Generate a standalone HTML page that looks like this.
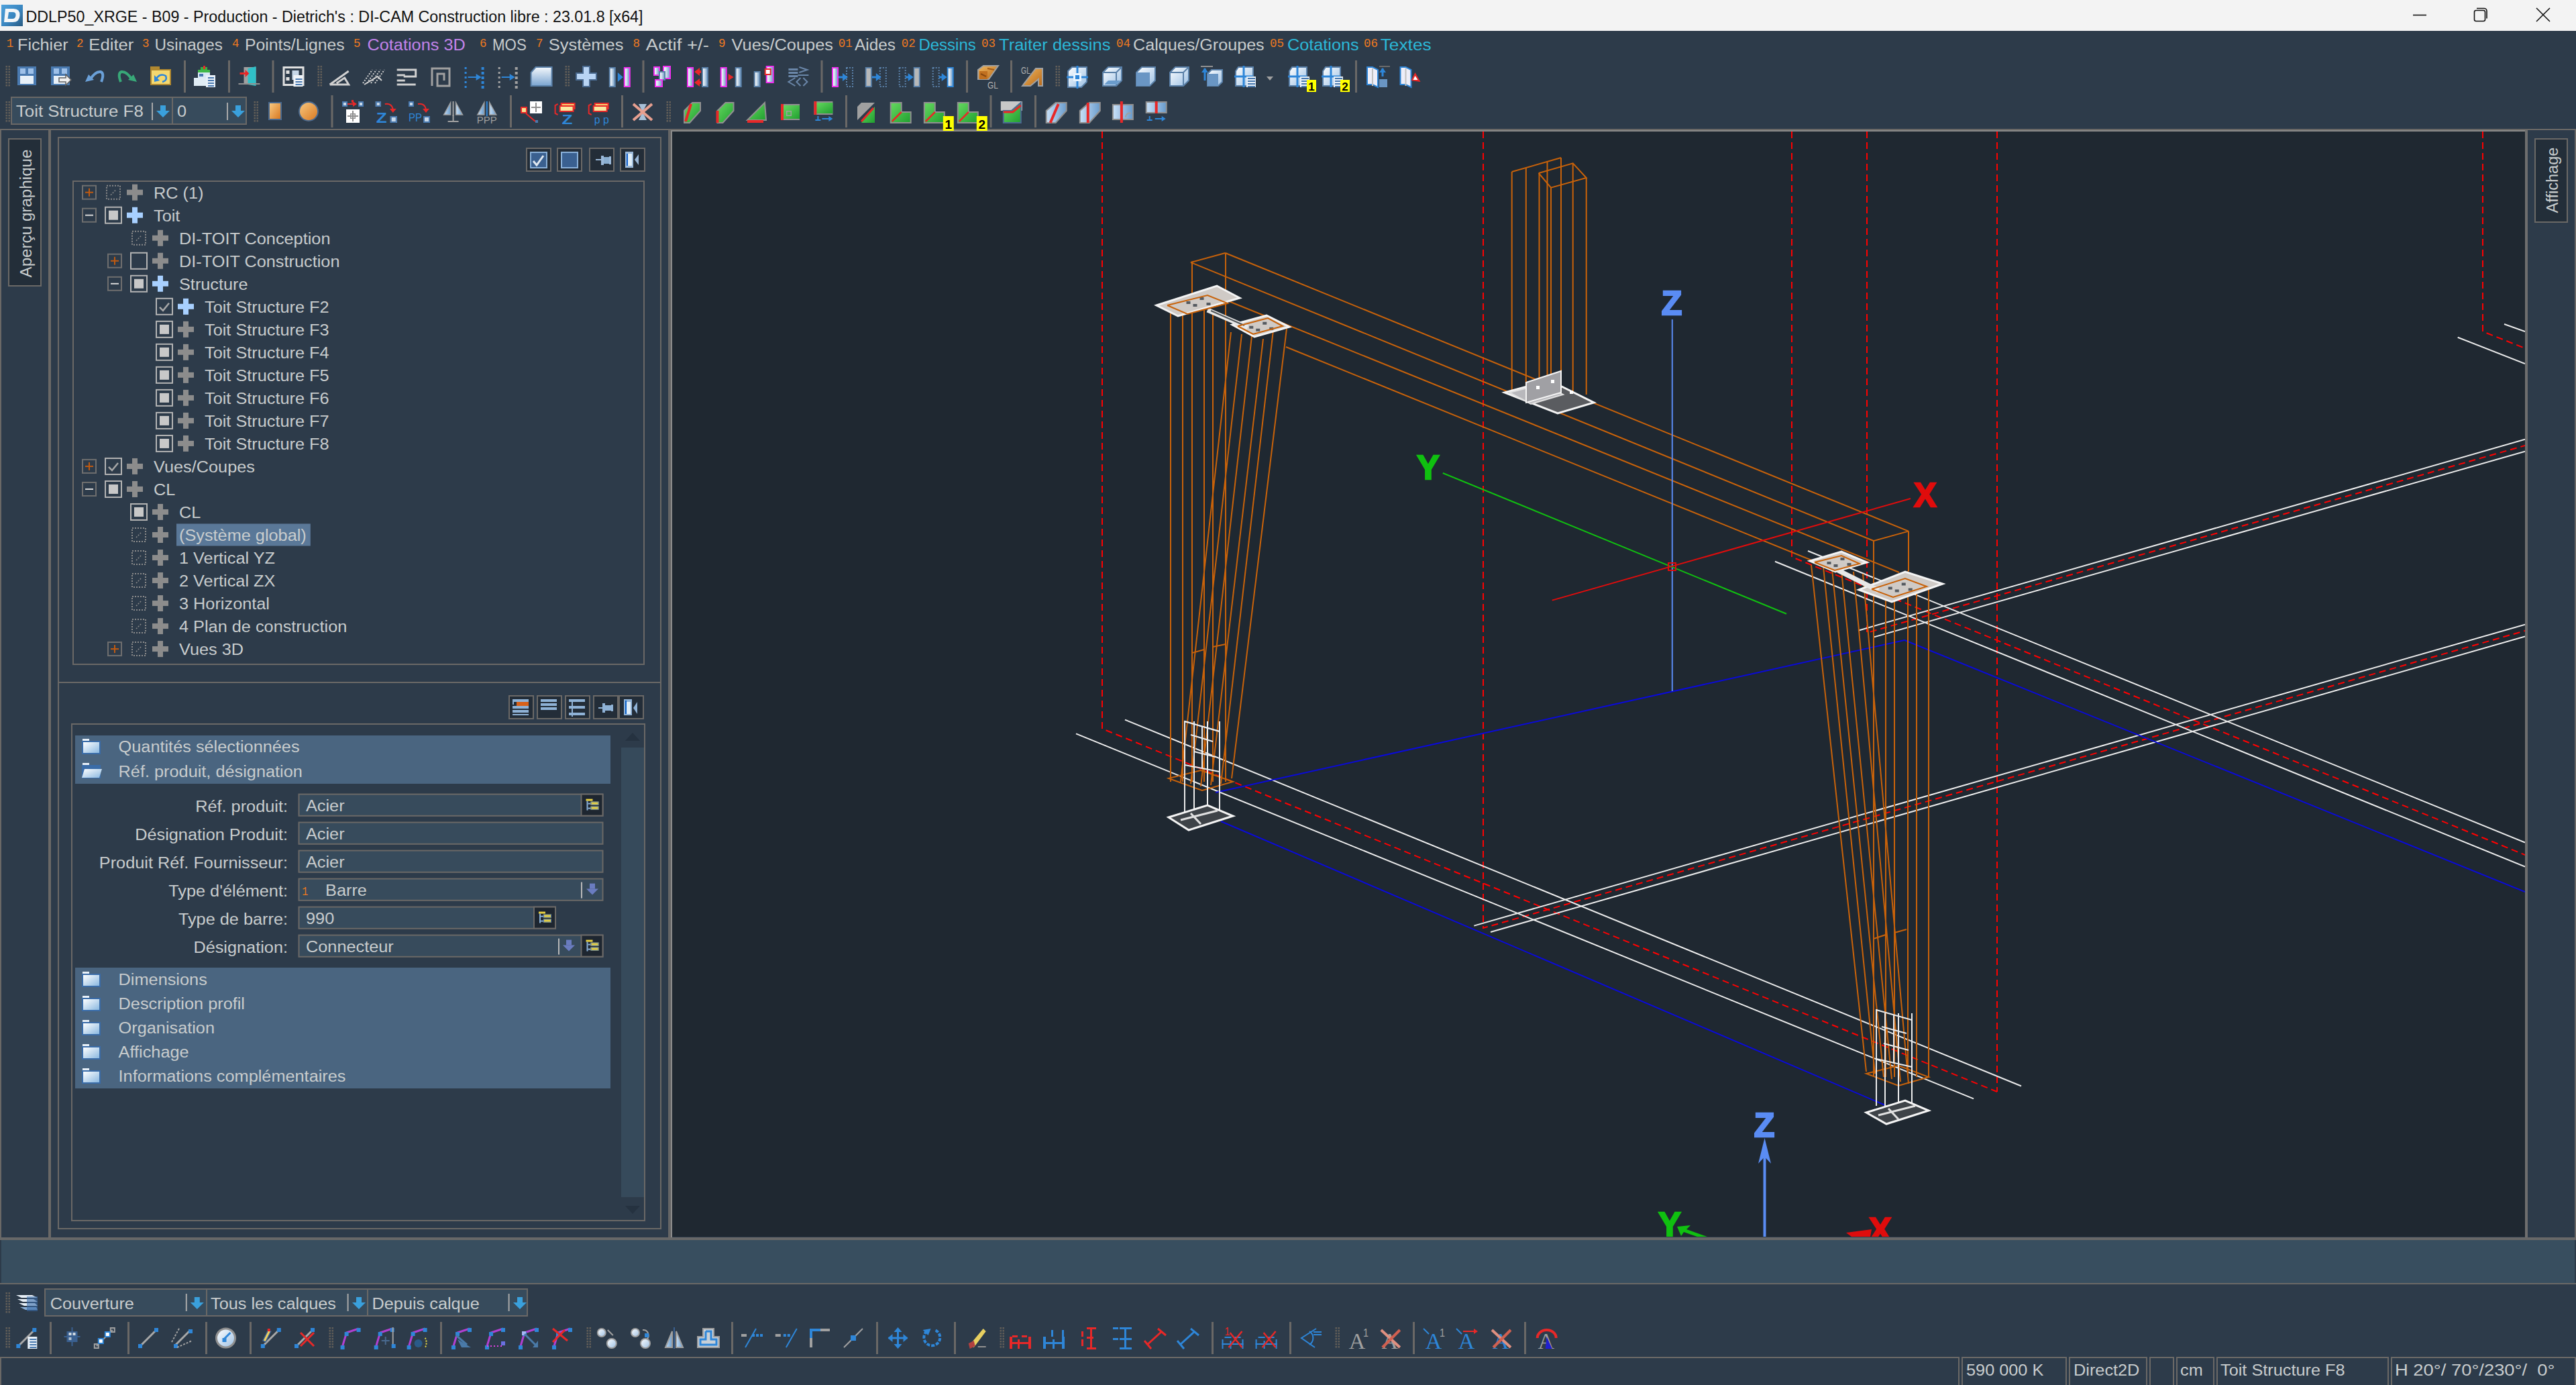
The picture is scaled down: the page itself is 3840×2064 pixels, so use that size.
<!DOCTYPE html><html><head><meta charset="utf-8"><style>html,body{margin:0;padding:0;background:#2d3b4a;overflow:hidden;width:3840px;height:2064px}</style></head><body><svg width="3840" height="2064" viewBox="0 0 3840 2064" style="display:block">
<style>text{font-family:"Liberation Sans", sans-serif;}</style>
<rect x="0" y="0" width="3840" height="2064" fill="#2d3b4a" />
<rect x="0" y="0" width="3840" height="46" fill="#f3f3f3" />
<defs><linearGradient id="gico" x1="0" y1="0" x2="1" y2="1"><stop offset="0" stop-color="#4fa2dc"/><stop offset="0.55" stop-color="#3a86c0"/><stop offset="1" stop-color="#2a5a80"/></linearGradient></defs>
<rect x="2" y="7" width="32" height="32" fill="url(#gico)" />
<path d="M8 13 H20 Q30 13 29.5 23 Q29 33 19 33 H6 Z M13 18 L11.5 28 H18.5 Q23 28 23.5 23 Q24 18 19 18 Z" fill="#f4f6f8" fill-rule="evenodd"/>
<text x="38.5" y="33.2" font-size="23" fill="#111111" textLength="920" lengthAdjust="spacingAndGlyphs" >DDLP50_XRGE - B09 - Production - Dietrich's : DI-CAM Construction libre : 23.01.8 [x64]</text>
<line x1="3597" y1="22.5" x2="3617" y2="22.5" stroke="#111" stroke-width="1.6" />
<rect x="3688.5" y="15.5" width="16" height="16" rx="2.5" fill="none" stroke="#111" stroke-width="1.6"/>
<path d="M3692 12.5 h11 a4 4 0 0 1 4 4 v11" fill="none" stroke="#111" stroke-width="1.6"/>
<line x1="3781" y1="12" x2="3801" y2="32" stroke="#111" stroke-width="1.6" />
<line x1="3801" y1="12" x2="3781" y2="32" stroke="#111" stroke-width="1.6" />
<text x="9.8" y="70.3" font-size="19" fill="#f07a20" textLength="10.5" lengthAdjust="spacingAndGlyphs" style='font-family:"Liberation Mono", monospace' >1</text>
<text x="26" y="75" font-size="23" fill="#c8cccd" textLength="75.6" lengthAdjust="spacingAndGlyphs" >Fichier</text>
<text x="113.9" y="70.3" font-size="19" fill="#f07a20" textLength="10.5" lengthAdjust="spacingAndGlyphs" style='font-family:"Liberation Mono", monospace' >2</text>
<text x="132.3" y="75" font-size="23" fill="#c8cccd" textLength="67.1" lengthAdjust="spacingAndGlyphs" >Editer</text>
<text x="212" y="70.3" font-size="19" fill="#f07a20" textLength="10.5" lengthAdjust="spacingAndGlyphs" style='font-family:"Liberation Mono", monospace' >3</text>
<text x="230.6" y="75" font-size="23" fill="#c8cccd" textLength="101.2" lengthAdjust="spacingAndGlyphs" >Usinages</text>
<text x="346" y="70.3" font-size="19" fill="#f07a20" textLength="10.5" lengthAdjust="spacingAndGlyphs" style='font-family:"Liberation Mono", monospace' >4</text>
<text x="365" y="75" font-size="23" fill="#c8cccd" textLength="148.7" lengthAdjust="spacingAndGlyphs" >Points/Lignes</text>
<text x="527" y="70.3" font-size="19" fill="#f07a20" textLength="10.5" lengthAdjust="spacingAndGlyphs" style='font-family:"Liberation Mono", monospace' >5</text>
<text x="547.4" y="75" font-size="23" fill="#c283ea" textLength="146.4" lengthAdjust="spacingAndGlyphs" >Cotations 3D</text>
<text x="715" y="70.3" font-size="19" fill="#f07a20" textLength="10.5" lengthAdjust="spacingAndGlyphs" style='font-family:"Liberation Mono", monospace' >6</text>
<text x="734" y="75" font-size="23" fill="#c8cccd" textLength="50.8" lengthAdjust="spacingAndGlyphs" >MOS</text>
<text x="799" y="70.3" font-size="19" fill="#f07a20" textLength="10.5" lengthAdjust="spacingAndGlyphs" style='font-family:"Liberation Mono", monospace' >7</text>
<text x="817.7" y="75" font-size="23" fill="#c8cccd" textLength="111.8" lengthAdjust="spacingAndGlyphs" >Systèmes</text>
<text x="943.6" y="70.3" font-size="19" fill="#f07a20" textLength="10.5" lengthAdjust="spacingAndGlyphs" style='font-family:"Liberation Mono", monospace' >8</text>
<text x="962.8" y="75" font-size="23" fill="#c8cccd" textLength="94" lengthAdjust="spacingAndGlyphs" >Actif +/-</text>
<text x="1071" y="70.3" font-size="19" fill="#f07a20" textLength="10.5" lengthAdjust="spacingAndGlyphs" style='font-family:"Liberation Mono", monospace' >9</text>
<text x="1090.6" y="75" font-size="23" fill="#c8cccd" textLength="151.4" lengthAdjust="spacingAndGlyphs" >Vues/Coupes</text>
<text x="1249.8" y="70.3" font-size="19" fill="#f07a20" textLength="21" lengthAdjust="spacingAndGlyphs" style='font-family:"Liberation Mono", monospace' >01</text>
<text x="1274" y="75" font-size="23" fill="#c8cccd" textLength="61" lengthAdjust="spacingAndGlyphs" >Aides</text>
<text x="1343.8" y="70.3" font-size="19" fill="#f07a20" textLength="21" lengthAdjust="spacingAndGlyphs" style='font-family:"Liberation Mono", monospace' >02</text>
<text x="1369.4" y="75" font-size="23" fill="#2cb8d8" textLength="85.4" lengthAdjust="spacingAndGlyphs" >Dessins</text>
<text x="1463" y="70.3" font-size="19" fill="#f07a20" textLength="21" lengthAdjust="spacingAndGlyphs" style='font-family:"Liberation Mono", monospace' >03</text>
<text x="1489" y="75" font-size="23" fill="#2cb8d8" textLength="166.5" lengthAdjust="spacingAndGlyphs" >Traiter dessins</text>
<text x="1664" y="70.3" font-size="19" fill="#f07a20" textLength="21" lengthAdjust="spacingAndGlyphs" style='font-family:"Liberation Mono", monospace' >04</text>
<text x="1689" y="75" font-size="23" fill="#c8cccd" textLength="195.7" lengthAdjust="spacingAndGlyphs" >Calques/Groupes</text>
<text x="1893" y="70.3" font-size="19" fill="#f07a20" textLength="21" lengthAdjust="spacingAndGlyphs" style='font-family:"Liberation Mono", monospace' >05</text>
<text x="1919" y="75" font-size="23" fill="#2cb8d8" textLength="106.7" lengthAdjust="spacingAndGlyphs" >Cotations</text>
<text x="2033" y="70.3" font-size="19" fill="#f07a20" textLength="21" lengthAdjust="spacingAndGlyphs" style='font-family:"Liberation Mono", monospace' >06</text>
<text x="2057.7" y="75" font-size="23" fill="#2cb8d8" textLength="76" lengthAdjust="spacingAndGlyphs" >Textes</text>
<rect x="0" y="192" width="3840" height="2" fill="#6a6866" />
<rect x="0" y="194" width="2" height="1652" fill="#6a6866" />
<rect x="72" y="194" width="4" height="1652" fill="#6a6866" />
<rect x="13.0" y="207.0" width="48" height="219" fill="#232e39" stroke="#6a6866" stroke-width="2" />
<text transform="translate(46.5,413.5) rotate(-90)" font-size="23" fill="#c8cccd" textLength="191" lengthAdjust="spacingAndGlyphs">Aperçu graphique</text>
<rect x="87.0" y="205.0" width="898" height="1626" fill="none" stroke="#6a6866" stroke-width="2" />
<rect x="86" y="1016" width="900" height="2" fill="#6a6866" />
<rect x="996" y="194" width="4" height="1652" fill="#656565" />
<rect x="1000" y="194" width="2" height="1650" fill="#8a8a8a" />
<rect x="1000" y="194" width="2764" height="2" fill="#8a8a8a" />
<rect x="3764" y="194" width="4" height="1652" fill="#6e6e6e" />
<rect x="0" y="1844" width="3840" height="4" fill="#686868" />
<rect x="1002" y="196" width="2762" height="1647" fill="#1f2831" />
<rect x="3779.0" y="207.0" width="48" height="124" fill="#232e39" stroke="#6a6866" stroke-width="2" />
<rect x="3838" y="194" width="2" height="1652" fill="#6a6866" />
<text transform="translate(3812.5,317.5) rotate(-90)" font-size="23" fill="#c8cccd" textLength="98" lengthAdjust="spacingAndGlyphs">Affichage</text>
<rect x="785.0" y="221.0" width="36" height="34" fill="#232d38" stroke="#6a6866" stroke-width="2" />
<rect x="831.0" y="221.0" width="36" height="34" fill="#232d38" stroke="#6a6866" stroke-width="2" />
<rect x="879.0" y="221.0" width="36" height="34" fill="#232d38" stroke="#6a6866" stroke-width="2" />
<rect x="925.0" y="221.0" width="36" height="34" fill="#232d38" stroke="#6a6866" stroke-width="2" />
<rect x="791.0" y="227.0" width="24" height="23" fill="#3a6090" stroke="#8ab0d8" stroke-width="2" />
<polyline points="795,240 800,246 810,232" fill="none" stroke="#e0e8f0" stroke-width="3" />
<rect x="837.0" y="227.0" width="24" height="23" fill="#3a6090" stroke="#8ab0d8" stroke-width="2" />
<line x1="888" y1="238" x2="896" y2="238" stroke="#9ab8d8" stroke-width="2" />
<rect x="896" y="232" width="4" height="14" fill="#9ab8d8" />
<rect x="900" y="234" width="8" height="10" fill="#8aaed0" />
<rect x="908" y="233" width="3" height="12" fill="#9ab8d8" />
<rect x="932" y="226" width="12" height="24" fill="#9ab8d8" />
<rect x="934" y="229" width="2" height="18" fill="#1060d0" />
<rect x="936" y="229" width="6" height="18" fill="#e0eef8" />
<polygon points="946,238 952,230 952,246" fill="#9ab8d8" stroke="none" stroke-width="2" />
<rect x="109.0" y="270.0" width="851" height="720" fill="none" stroke="#6a6866" stroke-width="2" />
<rect x="123.0" y="276.7" width="20" height="20" fill="none" stroke="#6e6e6e" stroke-width="2" />
<rect x="127" y="285.7" width="12" height="2" fill="#c05a10" />
<rect x="132" y="280.7" width="2" height="12" fill="#c05a10" />
<rect x="159" y="276.7" width="20" height="20" fill="none" stroke="#8a8a8a" stroke-width="2" stroke-dasharray="2,2"/>
<line x1="165" y1="290.7" x2="173" y2="282.7" stroke="#8a8a8a" stroke-width="1.5" stroke-dasharray="2,2"/>
<rect x="197" y="274.7" width="8" height="24" fill="#8c8c8c" />
<rect x="189" y="282.7" width="24" height="8" fill="#8c8c8c" />
<text x="229" y="295.7" font-size="23" fill="#c8cccd" textLength="74.5" lengthAdjust="spacingAndGlyphs" >RC (1)</text>
<rect x="123.0" y="310.71999999999997" width="20" height="20" fill="none" stroke="#6e6e6e" stroke-width="2" />
<rect x="127" y="319.71999999999997" width="12" height="2" fill="#d8d8d8" />
<rect x="157.0" y="308.71999999999997" width="24" height="24" fill="none" stroke="#b4b4b4" stroke-width="2" />
<rect x="162" y="313.71999999999997" width="14" height="14" fill="#c8c8c8" />
<rect x="197" y="308.71999999999997" width="8" height="24" fill="#a8d0ff" />
<rect x="189" y="316.71999999999997" width="24" height="8" fill="#a8d0ff" />
<text x="229" y="329.71999999999997" font-size="23" fill="#c8cccd" textLength="39.4" lengthAdjust="spacingAndGlyphs" >Toit</text>
<rect x="197" y="344.74" width="20" height="20" fill="none" stroke="#8a8a8a" stroke-width="2" stroke-dasharray="2,2"/>
<line x1="203" y1="358.74" x2="211" y2="350.74" stroke="#8a8a8a" stroke-width="1.5" stroke-dasharray="2,2"/>
<rect x="235" y="342.74" width="8" height="24" fill="#8c8c8c" />
<rect x="227" y="350.74" width="24" height="8" fill="#8c8c8c" />
<text x="267" y="363.74" font-size="23" fill="#c8cccd" textLength="225.5" lengthAdjust="spacingAndGlyphs" >DI-TOIT Conception</text>
<rect x="161.0" y="378.76" width="20" height="20" fill="none" stroke="#6e6e6e" stroke-width="2" />
<rect x="165" y="387.76" width="12" height="2" fill="#c05a10" />
<rect x="170" y="382.76" width="2" height="12" fill="#c05a10" />
<rect x="195.0" y="376.76" width="24" height="24" fill="none" stroke="#b4b4b4" stroke-width="2" />
<rect x="235" y="376.76" width="8" height="24" fill="#8c8c8c" />
<rect x="227" y="384.76" width="24" height="8" fill="#8c8c8c" />
<text x="267" y="397.76" font-size="23" fill="#c8cccd" textLength="239.5" lengthAdjust="spacingAndGlyphs" >DI-TOIT Construction</text>
<rect x="161.0" y="412.78" width="20" height="20" fill="none" stroke="#6e6e6e" stroke-width="2" />
<rect x="165" y="421.78" width="12" height="2" fill="#d8d8d8" />
<rect x="195.0" y="410.78" width="24" height="24" fill="none" stroke="#b4b4b4" stroke-width="2" />
<rect x="200" y="415.78" width="14" height="14" fill="#c8c8c8" />
<rect x="235" y="410.78" width="8" height="24" fill="#a8d0ff" />
<rect x="227" y="418.78" width="24" height="8" fill="#a8d0ff" />
<text x="267" y="431.78" font-size="23" fill="#c8cccd" textLength="102.6" lengthAdjust="spacingAndGlyphs" >Structure</text>
<rect x="233.0" y="444.8" width="24" height="24" fill="none" stroke="#b4b4b4" stroke-width="2" />
<polyline points="238,457.8 243,462.8 252,451.8" fill="none" stroke="#a8a8a8" stroke-width="2.5" />
<rect x="273" y="444.8" width="8" height="24" fill="#a8d0ff" />
<rect x="265" y="452.8" width="24" height="8" fill="#a8d0ff" />
<text x="305" y="465.8" font-size="23" fill="#c8cccd" textLength="185.6" lengthAdjust="spacingAndGlyphs" >Toit Structure F2</text>
<rect x="233.0" y="478.82" width="24" height="24" fill="none" stroke="#b4b4b4" stroke-width="2" />
<rect x="238" y="483.82" width="14" height="14" fill="#c8c8c8" />
<rect x="273" y="478.82" width="8" height="24" fill="#8c8c8c" />
<rect x="265" y="486.82" width="24" height="8" fill="#8c8c8c" />
<text x="305" y="499.82" font-size="23" fill="#c8cccd" textLength="185.6" lengthAdjust="spacingAndGlyphs" >Toit Structure F3</text>
<rect x="233.0" y="512.84" width="24" height="24" fill="none" stroke="#b4b4b4" stroke-width="2" />
<rect x="238" y="517.84" width="14" height="14" fill="#c8c8c8" />
<rect x="273" y="512.84" width="8" height="24" fill="#8c8c8c" />
<rect x="265" y="520.84" width="24" height="8" fill="#8c8c8c" />
<text x="305" y="533.84" font-size="23" fill="#c8cccd" textLength="185.6" lengthAdjust="spacingAndGlyphs" >Toit Structure F4</text>
<rect x="233.0" y="546.86" width="24" height="24" fill="none" stroke="#b4b4b4" stroke-width="2" />
<rect x="238" y="551.86" width="14" height="14" fill="#c8c8c8" />
<rect x="273" y="546.86" width="8" height="24" fill="#8c8c8c" />
<rect x="265" y="554.86" width="24" height="8" fill="#8c8c8c" />
<text x="305" y="567.86" font-size="23" fill="#c8cccd" textLength="185.6" lengthAdjust="spacingAndGlyphs" >Toit Structure F5</text>
<rect x="233.0" y="580.88" width="24" height="24" fill="none" stroke="#b4b4b4" stroke-width="2" />
<rect x="238" y="585.88" width="14" height="14" fill="#c8c8c8" />
<rect x="273" y="580.88" width="8" height="24" fill="#8c8c8c" />
<rect x="265" y="588.88" width="24" height="8" fill="#8c8c8c" />
<text x="305" y="601.88" font-size="23" fill="#c8cccd" textLength="185.6" lengthAdjust="spacingAndGlyphs" >Toit Structure F6</text>
<rect x="233.0" y="614.9000000000001" width="24" height="24" fill="none" stroke="#b4b4b4" stroke-width="2" />
<rect x="238" y="619.9000000000001" width="14" height="14" fill="#c8c8c8" />
<rect x="273" y="614.9000000000001" width="8" height="24" fill="#8c8c8c" />
<rect x="265" y="622.9000000000001" width="24" height="8" fill="#8c8c8c" />
<text x="305" y="635.9000000000001" font-size="23" fill="#c8cccd" textLength="185.6" lengthAdjust="spacingAndGlyphs" >Toit Structure F7</text>
<rect x="233.0" y="648.9200000000001" width="24" height="24" fill="none" stroke="#b4b4b4" stroke-width="2" />
<rect x="238" y="653.9200000000001" width="14" height="14" fill="#c8c8c8" />
<rect x="273" y="648.9200000000001" width="8" height="24" fill="#8c8c8c" />
<rect x="265" y="656.9200000000001" width="24" height="8" fill="#8c8c8c" />
<text x="305" y="669.9200000000001" font-size="23" fill="#c8cccd" textLength="185.6" lengthAdjust="spacingAndGlyphs" >Toit Structure F8</text>
<rect x="123.0" y="684.94" width="20" height="20" fill="none" stroke="#6e6e6e" stroke-width="2" />
<rect x="127" y="693.94" width="12" height="2" fill="#c05a10" />
<rect x="132" y="688.94" width="2" height="12" fill="#c05a10" />
<rect x="157.0" y="682.94" width="24" height="24" fill="none" stroke="#b4b4b4" stroke-width="2" />
<polyline points="162,695.94 167,700.94 176,689.94" fill="none" stroke="#a8a8a8" stroke-width="2.5" />
<rect x="197" y="682.94" width="8" height="24" fill="#8c8c8c" />
<rect x="189" y="690.94" width="24" height="8" fill="#8c8c8c" />
<text x="229" y="703.94" font-size="23" fill="#c8cccd" textLength="151.0" lengthAdjust="spacingAndGlyphs" >Vues/Coupes</text>
<rect x="123.0" y="718.96" width="20" height="20" fill="none" stroke="#6e6e6e" stroke-width="2" />
<rect x="127" y="727.96" width="12" height="2" fill="#d8d8d8" />
<rect x="157.0" y="716.96" width="24" height="24" fill="none" stroke="#b4b4b4" stroke-width="2" />
<rect x="162" y="721.96" width="14" height="14" fill="#c8c8c8" />
<rect x="197" y="716.96" width="8" height="24" fill="#8c8c8c" />
<rect x="189" y="724.96" width="24" height="8" fill="#8c8c8c" />
<text x="229" y="737.96" font-size="23" fill="#c8cccd" textLength="32.3" lengthAdjust="spacingAndGlyphs" >CL</text>
<rect x="195.0" y="750.98" width="24" height="24" fill="none" stroke="#b4b4b4" stroke-width="2" />
<rect x="200" y="755.98" width="14" height="14" fill="#c8c8c8" />
<rect x="235" y="750.98" width="8" height="24" fill="#8c8c8c" />
<rect x="227" y="758.98" width="24" height="8" fill="#8c8c8c" />
<text x="267" y="771.98" font-size="23" fill="#c8cccd" textLength="32.3" lengthAdjust="spacingAndGlyphs" >CL</text>
<rect x="197" y="787.0" width="20" height="20" fill="none" stroke="#8a8a8a" stroke-width="2" stroke-dasharray="2,2"/>
<line x1="203" y1="801.0" x2="211" y2="793.0" stroke="#8a8a8a" stroke-width="1.5" stroke-dasharray="2,2"/>
<rect x="235" y="785.0" width="8" height="24" fill="#8c8c8c" />
<rect x="227" y="793.0" width="24" height="8" fill="#8c8c8c" />
<rect x="263" y="780.5" width="199.82187499999998" height="33" fill="#5a7898" />
<text x="267" y="806.0" font-size="23" fill="#c8cccd" textLength="189.8" lengthAdjust="spacingAndGlyphs" >(Système global)</text>
<rect x="197" y="821.02" width="20" height="20" fill="none" stroke="#8a8a8a" stroke-width="2" stroke-dasharray="2,2"/>
<line x1="203" y1="835.02" x2="211" y2="827.02" stroke="#8a8a8a" stroke-width="1.5" stroke-dasharray="2,2"/>
<rect x="235" y="819.02" width="8" height="24" fill="#8c8c8c" />
<rect x="227" y="827.02" width="24" height="8" fill="#8c8c8c" />
<text x="267" y="840.02" font-size="23" fill="#c8cccd" textLength="143.0" lengthAdjust="spacingAndGlyphs" >1 Vertical YZ</text>
<rect x="197" y="855.04" width="20" height="20" fill="none" stroke="#8a8a8a" stroke-width="2" stroke-dasharray="2,2"/>
<line x1="203" y1="869.04" x2="211" y2="861.04" stroke="#8a8a8a" stroke-width="1.5" stroke-dasharray="2,2"/>
<rect x="235" y="853.04" width="8" height="24" fill="#8c8c8c" />
<rect x="227" y="861.04" width="24" height="8" fill="#8c8c8c" />
<text x="267" y="874.04" font-size="23" fill="#c8cccd" textLength="143.4" lengthAdjust="spacingAndGlyphs" >2 Vertical ZX</text>
<rect x="197" y="889.06" width="20" height="20" fill="none" stroke="#8a8a8a" stroke-width="2" stroke-dasharray="2,2"/>
<line x1="203" y1="903.06" x2="211" y2="895.06" stroke="#8a8a8a" stroke-width="1.5" stroke-dasharray="2,2"/>
<rect x="235" y="887.06" width="8" height="24" fill="#8c8c8c" />
<rect x="227" y="895.06" width="24" height="8" fill="#8c8c8c" />
<text x="267" y="908.06" font-size="23" fill="#c8cccd" textLength="135.0" lengthAdjust="spacingAndGlyphs" >3 Horizontal</text>
<rect x="197" y="923.0800000000002" width="20" height="20" fill="none" stroke="#8a8a8a" stroke-width="2" stroke-dasharray="2,2"/>
<line x1="203" y1="937.0800000000002" x2="211" y2="929.0800000000002" stroke="#8a8a8a" stroke-width="1.5" stroke-dasharray="2,2"/>
<rect x="235" y="921.0800000000002" width="8" height="24" fill="#8c8c8c" />
<rect x="227" y="929.0800000000002" width="24" height="8" fill="#8c8c8c" />
<text x="267" y="942.0800000000002" font-size="23" fill="#c8cccd" textLength="250.3" lengthAdjust="spacingAndGlyphs" >4 Plan de construction</text>
<rect x="161.0" y="957.1000000000001" width="20" height="20" fill="none" stroke="#6e6e6e" stroke-width="2" />
<rect x="165" y="966.1000000000001" width="12" height="2" fill="#c05a10" />
<rect x="170" y="961.1000000000001" width="2" height="12" fill="#c05a10" />
<rect x="197" y="957.1000000000001" width="20" height="20" fill="none" stroke="#8a8a8a" stroke-width="2" stroke-dasharray="2,2"/>
<line x1="203" y1="971.1000000000001" x2="211" y2="963.1000000000001" stroke="#8a8a8a" stroke-width="1.5" stroke-dasharray="2,2"/>
<rect x="235" y="955.1000000000001" width="8" height="24" fill="#8c8c8c" />
<rect x="227" y="963.1000000000001" width="24" height="8" fill="#8c8c8c" />
<text x="267" y="976.1000000000001" font-size="23" fill="#c8cccd" textLength="96.1" lengthAdjust="spacingAndGlyphs" >Vues 3D</text>
<rect x="759.0" y="1037.0" width="36" height="34" fill="#232d38" stroke="#6a6866" stroke-width="2" />
<rect x="801.0" y="1037.0" width="36" height="34" fill="#232d38" stroke="#6a6866" stroke-width="2" />
<rect x="843.0" y="1037.0" width="36" height="34" fill="#232d38" stroke="#6a6866" stroke-width="2" />
<rect x="885.0" y="1037.0" width="36" height="34" fill="#232d38" stroke="#6a6866" stroke-width="2" />
<rect x="923.0" y="1037.0" width="36" height="34" fill="#232d38" stroke="#6a6866" stroke-width="2" />
<rect x="764" y="1042" width="24" height="4" fill="#8fb2d6" />
<rect x="764" y="1046" width="2" height="4" fill="#8fb2d6" />
<rect x="770" y="1046" width="18" height="6" fill="#d86018" />
<rect x="764" y="1052" width="24" height="4" fill="#8fb2d6" />
<rect x="764" y="1058" width="24" height="4" fill="#8fb2d6" />
<rect x="764" y="1064" width="24" height="2" fill="#8fb2d6" />
<rect x="806" y="1042" width="24" height="4" fill="#8fb2d6" />
<rect x="806" y="1048" width="24" height="4" fill="#8fb2d6" />
<rect x="806" y="1054" width="24" height="4" fill="#8fb2d6" />
<rect x="848" y="1042" width="24" height="4" fill="#8fb2d6" />
<rect x="852" y="1046" width="2" height="22" fill="#8fb2d6" />
<rect x="848" y="1052" width="24" height="4" fill="#8fb2d6" />
<rect x="848" y="1062" width="24" height="4" fill="#8fb2d6" />
<line x1="892" y1="1055" x2="900" y2="1055" stroke="#8fb2d6" stroke-width="2" />
<rect x="898" y="1048" width="4" height="14" fill="#8fb2d6" />
<rect x="902" y="1051" width="10" height="8" fill="#8fb2d6" />
<rect x="911" y="1050" width="3" height="10" fill="#8fb2d6" />
<rect x="930" y="1042" width="12" height="24" fill="#8fb2d6" />
<rect x="932" y="1044" width="2" height="20" fill="#0a60c8" />
<rect x="934" y="1046" width="6" height="18" fill="#e0eef8" />
<polygon points="944,1055 950,1046 950,1064" fill="#8fb2d6" stroke="none" stroke-width="2" />
<rect x="107.0" y="1079.0" width="854" height="740" fill="none" stroke="#6a6866" stroke-width="2" />
<polygon points="932,1104 943,1092 954,1104" fill="#253240" stroke="none" stroke-width="2" />
<rect x="926" y="1114" width="34" height="670" fill="#364a5b" />
<polygon points="932,1797 943,1809 954,1797" fill="#253240" stroke="none" stroke-width="2" />
<rect x="112" y="1096" width="798" height="72" fill="#4a6580" />
<rect x="123" y="1101" width="10" height="3" fill="#e8f0f8" />
<rect x="122" y="1104" width="28" height="20" fill="#3a6ca8" />
<defs><linearGradient id="fg" x1="0" y1="0" x2="1" y2="1"><stop offset="0" stop-color="#ffffff"/><stop offset="1" stop-color="#8ab8e0"/></linearGradient></defs>
<rect x="124" y="1106" width="24" height="16" fill="url(#fg)" />
<text x="176.6" y="1120.7" font-size="23" fill="#c8cccd" textLength="270.0" lengthAdjust="spacingAndGlyphs" >Quantités sélectionnées</text>
<rect x="123" y="1137" width="10" height="3" fill="#e8f0f8" />
<rect x="122" y="1140" width="28" height="20" fill="#3a6ca8" />

<polygon points="126,1146 152,1146 148,1159 122,1159" fill="url(#fg)" stroke="none" stroke-width="2" />
<text x="176.6" y="1157.6" font-size="23" fill="#c8cccd" textLength="274.2" lengthAdjust="spacingAndGlyphs" >Réf. produit, désignation</text>
<text x="291.2" y="1210.1" font-size="23" fill="#c8cccd" textLength="137.8" lengthAdjust="spacingAndGlyphs" >Réf. produit:</text>
<rect x="445.5" y="1183.6" width="453.0" height="32.2" fill="#374b5c" stroke="#6a6866" stroke-width="2" />
<text x="456" y="1208.6" font-size="23" fill="#c8cccd" textLength="57.6" lengthAdjust="spacingAndGlyphs" >Acier</text>
<rect x="865.5" y="1182.6" width="34" height="34" fill="#6a6866" />
<rect x="867.5" y="1184.6" width="30" height="30" fill="#1e2630" />
<rect x="873.5" y="1190.6" width="10" height="3" fill="#e8d040" />
<rect x="874.5" y="1193.6" width="2" height="14" fill="#8ab0d8" />
<rect x="876.5" y="1196.6" width="4" height="2" fill="#8ab0d8" />
<rect x="880.5" y="1194.6" width="12" height="5" fill="#e8d040" />
<rect x="876.5" y="1203.6" width="4" height="2" fill="#8ab0d8" />
<rect x="880.5" y="1201.6" width="12" height="5" fill="#e8d040" />
<rect x="881.0" y="1195.1" width="11" height="4" fill="none" stroke="#5a80b0" stroke-width="1" />
<rect x="881.0" y="1202.1" width="11" height="4" fill="none" stroke="#5a80b0" stroke-width="1" />
<text x="201.2" y="1252.1" font-size="23" fill="#c8cccd" textLength="227.8" lengthAdjust="spacingAndGlyphs" >Désignation Produit:</text>
<rect x="445.5" y="1225.6" width="453.0" height="32.2" fill="#374b5c" stroke="#6a6866" stroke-width="2" />
<text x="456" y="1250.6" font-size="23" fill="#c8cccd" textLength="57.6" lengthAdjust="spacingAndGlyphs" >Acier</text>
<text x="147.8" y="1294.1" font-size="23" fill="#c8cccd" textLength="281.2" lengthAdjust="spacingAndGlyphs" >Produit Réf. Fournisseur:</text>
<rect x="445.5" y="1267.6" width="453.0" height="32.2" fill="#374b5c" stroke="#6a6866" stroke-width="2" />
<text x="456" y="1292.6" font-size="23" fill="#c8cccd" textLength="57.6" lengthAdjust="spacingAndGlyphs" >Acier</text>
<text x="251.2" y="1336.1" font-size="23" fill="#c8cccd" textLength="177.8" lengthAdjust="spacingAndGlyphs" >Type d'élément:</text>
<rect x="445.5" y="1309.6" width="453.0" height="32.2" fill="#374b5c" stroke="#6a6866" stroke-width="2" />
<text x="450.3" y="1333.6" font-size="19" fill="#f07a20" textLength="9" lengthAdjust="spacingAndGlyphs" style='font-family:"Liberation Mono", monospace' >1</text>
<text x="485" y="1334.6" font-size="23" fill="#c8cccd" textLength="61.9" lengthAdjust="spacingAndGlyphs" >Barre</text>
<rect x="866" y="1314.6" width="2" height="24" fill="#b8b8b8" />
<rect x="879" y="1316.6" width="8" height="8" fill="#6a7cc0" />
<polygon points="874,1324.6 892,1324.6 883,1333.6" fill="#6a7cc0" stroke="none" stroke-width="2" />
<text x="265.9" y="1378.1" font-size="23" fill="#c8cccd" textLength="163.1" lengthAdjust="spacingAndGlyphs" >Type de barre:</text>
<rect x="445.5" y="1351.6" width="382.5" height="32.2" fill="#374b5c" stroke="#6a6866" stroke-width="2" />
<text x="456" y="1376.6" font-size="23" fill="#c8cccd" textLength="42.2" lengthAdjust="spacingAndGlyphs" >990</text>
<rect x="795" y="1350.6" width="34" height="34" fill="#6a6866" />
<rect x="797" y="1352.6" width="30" height="30" fill="#1e2630" />
<rect x="803" y="1358.6" width="10" height="3" fill="#e8d040" />
<rect x="804" y="1361.6" width="2" height="14" fill="#8ab0d8" />
<rect x="806" y="1364.6" width="4" height="2" fill="#8ab0d8" />
<rect x="810" y="1362.6" width="12" height="5" fill="#e8d040" />
<rect x="806" y="1371.6" width="4" height="2" fill="#8ab0d8" />
<rect x="810" y="1369.6" width="12" height="5" fill="#e8d040" />
<rect x="810.5" y="1363.1" width="11" height="4" fill="none" stroke="#5a80b0" stroke-width="1" />
<rect x="810.5" y="1370.1" width="11" height="4" fill="none" stroke="#5a80b0" stroke-width="1" />
<text x="288.4" y="1420.1" font-size="23" fill="#c8cccd" textLength="140.6" lengthAdjust="spacingAndGlyphs" >Désignation:</text>
<rect x="445.5" y="1393.6" width="453.0" height="32.2" fill="#374b5c" stroke="#6a6866" stroke-width="2" />
<text x="456" y="1418.6" font-size="23" fill="#c8cccd" textLength="130.8" lengthAdjust="spacingAndGlyphs" >Connecteur</text>
<rect x="832" y="1398.6" width="2" height="24" fill="#b8b8b8" />
<rect x="844" y="1400.6" width="8" height="8" fill="#6a7cc0" />
<polygon points="839,1408.6 857,1408.6 848,1417.6" fill="#6a7cc0" stroke="none" stroke-width="2" />
<rect x="865.5" y="1392.6" width="34" height="34" fill="#6a6866" />
<rect x="867.5" y="1394.6" width="30" height="30" fill="#1e2630" />
<rect x="873.5" y="1400.6" width="10" height="3" fill="#e8d040" />
<rect x="874.5" y="1403.6" width="2" height="14" fill="#8ab0d8" />
<rect x="876.5" y="1406.6" width="4" height="2" fill="#8ab0d8" />
<rect x="880.5" y="1404.6" width="12" height="5" fill="#e8d040" />
<rect x="876.5" y="1413.6" width="4" height="2" fill="#8ab0d8" />
<rect x="880.5" y="1411.6" width="12" height="5" fill="#e8d040" />
<rect x="881.0" y="1405.1" width="11" height="4" fill="none" stroke="#5a80b0" stroke-width="1" />
<rect x="881.0" y="1412.1" width="11" height="4" fill="none" stroke="#5a80b0" stroke-width="1" />
<rect x="112" y="1442" width="798" height="180" fill="#4a6580" />
<rect x="123" y="1448" width="10" height="3" fill="#e8f0f8" />
<rect x="122" y="1451" width="28" height="20" fill="#3a6ca8" />

<rect x="124" y="1453" width="24" height="16" fill="url(#fg)" />
<text x="176.6" y="1467.8" font-size="23" fill="#c8cccd" textLength="132.2" lengthAdjust="spacingAndGlyphs" >Dimensions</text>
<rect x="123" y="1484" width="10" height="3" fill="#e8f0f8" />
<rect x="122" y="1487" width="28" height="20" fill="#3a6ca8" />

<rect x="124" y="1489" width="24" height="16" fill="url(#fg)" />
<text x="176.6" y="1503.8" font-size="23" fill="#c8cccd" textLength="188.4" lengthAdjust="spacingAndGlyphs" >Description profil</text>
<rect x="123" y="1520" width="10" height="3" fill="#e8f0f8" />
<rect x="122" y="1523" width="28" height="20" fill="#3a6ca8" />

<rect x="124" y="1525" width="24" height="16" fill="url(#fg)" />
<text x="176.6" y="1539.8" font-size="23" fill="#c8cccd" textLength="143.4" lengthAdjust="spacingAndGlyphs" >Organisation</text>
<rect x="123" y="1556" width="10" height="3" fill="#e8f0f8" />
<rect x="122" y="1559" width="28" height="20" fill="#3a6ca8" />

<rect x="124" y="1561" width="24" height="16" fill="url(#fg)" />
<text x="176.6" y="1575.8" font-size="23" fill="#c8cccd" textLength="105.0" lengthAdjust="spacingAndGlyphs" >Affichage</text>
<rect x="123" y="1592" width="10" height="3" fill="#e8f0f8" />
<rect x="122" y="1595" width="28" height="20" fill="#3a6ca8" />

<rect x="124" y="1597" width="24" height="16" fill="url(#fg)" />
<text x="176.6" y="1611.8" font-size="23" fill="#c8cccd" textLength="338.9" lengthAdjust="spacingAndGlyphs" >Informations complémentaires</text>
<rect x="2" y="1848" width="3836" height="64" fill="#384e5f" />
<rect x="0" y="1912" width="3840" height="2" fill="#6a6866" />
<defs><clipPath id="vpc"><rect x="1002" y="196" width="2762" height="1647"/></clipPath></defs>
<g clip-path="url(#vpc)" stroke-linecap="butt">
<polyline points="1643,196 1643,1086 2977,1627" fill="none" stroke="#ff0000" stroke-width="2" stroke-dasharray="10,6"/>
<polyline points="2211,196 2211,1383 3764,940" fill="none" stroke="#ff0000" stroke-width="2" stroke-dasharray="10,6"/>
<polyline points="2671,196 2671,830 3764,1274" fill="none" stroke="#ff0000" stroke-width="2" stroke-dasharray="10,6"/>
<polyline points="2783,196 2783,943 3764,664" fill="none" stroke="#ff0000" stroke-width="2" stroke-dasharray="10,6"/>
<polyline points="2977,196 2977,1627" fill="none" stroke="#ff0000" stroke-width="2" stroke-dasharray="10,6"/>
<polyline points="3701,196 3701,494 3764,519" fill="none" stroke="#ff0000" stroke-width="2" stroke-dasharray="10,6"/>
<line x1="1677" y1="1072.6" x2="3013" y2="1618.5" stroke="#ececec" stroke-width="2" />
<line x1="1604" y1="1093.4" x2="2942" y2="1637.4" stroke="#ececec" stroke-width="2" />
<line x1="2695" y1="821" x2="3764" y2="1255.5" stroke="#ececec" stroke-width="2" />
<line x1="2646" y1="836.8" x2="3764" y2="1291.6" stroke="#ececec" stroke-width="2" />
<line x1="2770" y1="939.7" x2="3764" y2="654.8" stroke="#ececec" stroke-width="2" />
<line x1="2793" y1="949.5" x2="3764" y2="672.6" stroke="#ececec" stroke-width="2" />
<line x1="2197.3" y1="1379.6" x2="3764" y2="930.7" stroke="#ececec" stroke-width="2" />
<line x1="2222" y1="1389" x2="3764" y2="948.5" stroke="#ececec" stroke-width="2" />
<line x1="3663.7" y1="502.7" x2="3764" y2="542" stroke="#ececec" stroke-width="2" />
<line x1="3733" y1="483" x2="3764" y2="494" stroke="#ececec" stroke-width="2" />
<line x1="1812" y1="1181" x2="2839" y2="954" stroke="#0a0ad8" stroke-width="2" />
<line x1="2839" y1="954" x2="3764" y2="1329" stroke="#0a0ad8" stroke-width="2" />
<line x1="1820" y1="1224" x2="2810" y2="1647" stroke="#0a0ad8" stroke-width="2" />
<line x1="1775" y1="391" x2="1826.5" y2="377" stroke="#c8620a" stroke-width="2" />
<line x1="1826.5" y1="377" x2="2845" y2="791.6" stroke="#c8620a" stroke-width="2" />
<line x1="1775" y1="391" x2="2793" y2="806" stroke="#c8620a" stroke-width="2" />
<line x1="2793" y1="806" x2="2845" y2="791.6" stroke="#c8620a" stroke-width="2" />
<line x1="2845" y1="791.6" x2="2845" y2="851" stroke="#c8620a" stroke-width="2" />
<line x1="1827" y1="447" x2="2831" y2="853" stroke="#c8620a" stroke-width="2" />
<line x1="1917" y1="517" x2="2750" y2="855" stroke="#c8620a" stroke-width="2" />
<line x1="1745" y1="462" x2="1745" y2="1165" stroke="#c8620a" stroke-width="2" />
<line x1="1763" y1="462" x2="1763" y2="1165" stroke="#c8620a" stroke-width="2" />
<line x1="1777" y1="391" x2="1777" y2="1165" stroke="#c8620a" stroke-width="2" />
<line x1="1795" y1="462" x2="1795" y2="1165" stroke="#c8620a" stroke-width="2" />
<line x1="1808" y1="462" x2="1808" y2="1165" stroke="#c8620a" stroke-width="2" />
<line x1="1827" y1="377" x2="1827" y2="1165" stroke="#c8620a" stroke-width="2" />
<line x1="1835" y1="495" x2="1760" y2="1165" stroke="#c8620a" stroke-width="2" />
<line x1="1851" y1="498" x2="1775" y2="1168" stroke="#c8620a" stroke-width="2" />
<line x1="1866" y1="501" x2="1790" y2="1172" stroke="#c8620a" stroke-width="2" />
<line x1="1883" y1="505" x2="1805" y2="1170" stroke="#c8620a" stroke-width="2" />
<line x1="1898" y1="492" x2="1820" y2="1168" stroke="#c8620a" stroke-width="2" />
<line x1="1918" y1="490" x2="1836" y2="1160" stroke="#c8620a" stroke-width="2" />
<line x1="1777" y1="973" x2="1795" y2="968" stroke="#c8620a" stroke-width="2" />
<line x1="1808" y1="964" x2="1827" y2="960" stroke="#c8620a" stroke-width="2" />
<polygon points="1742,1160 1790,1148 1838,1165 1792,1178" fill="none" stroke="#c8620a" stroke-width="2" />
<line x1="1766" y1="1075" x2="1766" y2="1210" stroke="#ececec" stroke-width="2" />
<line x1="1780" y1="1075" x2="1780" y2="1210" stroke="#ececec" stroke-width="2" />
<line x1="1800" y1="1075" x2="1800" y2="1210" stroke="#ececec" stroke-width="2" />
<line x1="1818" y1="1075" x2="1818" y2="1210" stroke="#ececec" stroke-width="2" />
<line x1="1766" y1="1075" x2="1818" y2="1090" stroke="#ececec" stroke-width="2" />
<polygon points="1766,1075 1818,1090 1818,1150 1766,1140" fill="none" stroke="#ececec" stroke-width="2" />
<line x1="1775" y1="1095" x2="1808" y2="1105" stroke="#ececec" stroke-width="2" />
<line x1="1780" y1="1120" x2="1812" y2="1128" stroke="#ececec" stroke-width="2" />
<line x1="1792" y1="1082" x2="1792" y2="1145" stroke="#ececec" stroke-width="2" />
<polygon points="1742,1218 1800,1200 1838,1216 1772,1237" fill="#3e4348" stroke="#f4f4f4" stroke-width="3" />
<line x1="1760" y1="1222" x2="1815" y2="1208" stroke="#e0e0e0" stroke-width="3" />
<line x1="1775" y1="1212" x2="1790" y2="1228" stroke="#e0e0e0" stroke-width="3" />
<polygon points="1724,455 1814,426 1848,444 1756,471" fill="#cfcac6" stroke="#f4f4f4" stroke-width="3" />
<rect x="1768.5" y="449.0" width="6" height="4" fill="#555a60" />
<rect x="1788.5" y="443.0" width="6" height="4" fill="#555a60" />
<rect x="1798.5" y="451.0" width="6" height="4" fill="#555a60" />
<rect x="1778.5" y="453.0" width="6" height="4" fill="#555a60" />
<polygon points="1837,484 1888,470 1922,487 1870,502" fill="#cfcac6" stroke="#f4f4f4" stroke-width="3" />
<rect x="1862.25" y="485.75" width="6" height="4" fill="#555a60" />
<rect x="1882.25" y="479.75" width="6" height="4" fill="#555a60" />
<rect x="1892.25" y="487.75" width="6" height="4" fill="#555a60" />
<rect x="1872.25" y="489.75" width="6" height="4" fill="#555a60" />
<line x1="1800" y1="462" x2="1860" y2="488" stroke="#e8e8e8" stroke-width="7" />
<line x1="1805" y1="463" x2="1855" y2="485" stroke="#505558" stroke-width="2" />
<polyline points="1740,455 1800,440 1830,452 1770,468 1740,455" fill="none" stroke="#c8620a" stroke-width="2" />
<polyline points="1845,486 1890,474 1912,486 1868,498 1845,486" fill="none" stroke="#c8620a" stroke-width="2" />
<line x1="2793" y1="806" x2="2793" y2="1605" stroke="#c8620a" stroke-width="2" />
<line x1="2811" y1="870" x2="2811" y2="1605" stroke="#c8620a" stroke-width="2" />
<line x1="2824" y1="870" x2="2824" y2="1605" stroke="#c8620a" stroke-width="2" />
<line x1="2844" y1="851" x2="2844" y2="1605" stroke="#c8620a" stroke-width="2" />
<line x1="2857" y1="870" x2="2857" y2="1605" stroke="#c8620a" stroke-width="2" />
<line x1="2875" y1="870" x2="2875" y2="1605" stroke="#c8620a" stroke-width="2" />
<line x1="2700" y1="842" x2="2782" y2="1597" stroke="#c8620a" stroke-width="2" />
<line x1="2718" y1="845" x2="2795" y2="1600" stroke="#c8620a" stroke-width="2" />
<line x1="2731" y1="848" x2="2808" y2="1605" stroke="#c8620a" stroke-width="2" />
<line x1="2745" y1="850" x2="2820" y2="1608" stroke="#c8620a" stroke-width="2" />
<line x1="2763" y1="852" x2="2833" y2="1612" stroke="#c8620a" stroke-width="2" />
<line x1="2777" y1="855" x2="2845" y2="1615" stroke="#c8620a" stroke-width="2" />
<line x1="2793" y1="1399" x2="2811" y2="1393" stroke="#c8620a" stroke-width="2" />
<line x1="2824" y1="1390" x2="2842" y2="1385" stroke="#c8620a" stroke-width="2" />
<polygon points="2782,1600 2830,1588 2875,1605 2830,1618" fill="none" stroke="#c8620a" stroke-width="2" />
<line x1="2797" y1="1510" x2="2797" y2="1648" stroke="#ececec" stroke-width="2" />
<line x1="2810" y1="1510" x2="2810" y2="1648" stroke="#ececec" stroke-width="2" />
<line x1="2830" y1="1510" x2="2830" y2="1648" stroke="#ececec" stroke-width="2" />
<line x1="2850" y1="1510" x2="2850" y2="1648" stroke="#ececec" stroke-width="2" />
<polygon points="2797,1505 2850,1520 2850,1590 2797,1578" fill="none" stroke="#ececec" stroke-width="2" />
<line x1="2805" y1="1530" x2="2842" y2="1540" stroke="#ececec" stroke-width="2" />
<line x1="2808" y1="1555" x2="2845" y2="1565" stroke="#ececec" stroke-width="2" />
<line x1="2823" y1="1512" x2="2823" y2="1585" stroke="#ececec" stroke-width="2" />
<polygon points="2782,1658 2840,1640 2875,1655 2812,1675" fill="#3e4348" stroke="#f4f4f4" stroke-width="3" />
<line x1="2800" y1="1662" x2="2855" y2="1648" stroke="#e0e0e0" stroke-width="3" />
<line x1="2815" y1="1652" x2="2830" y2="1668" stroke="#e0e0e0" stroke-width="3" />
<polygon points="2698,836 2745,822 2783,838 2736,852" fill="#cfcac6" stroke="#f4f4f4" stroke-width="3" />
<rect x="2723.5" y="837.0" width="6" height="4" fill="#555a60" />
<rect x="2743.5" y="831.0" width="6" height="4" fill="#555a60" />
<rect x="2753.5" y="839.0" width="6" height="4" fill="#555a60" />
<rect x="2733.5" y="841.0" width="6" height="4" fill="#555a60" />
<polygon points="2771,879 2840,852 2896,870 2820,897" fill="#cfcac6" stroke="#f4f4f4" stroke-width="3" />
<rect x="2814.75" y="874.5" width="6" height="4" fill="#555a60" />
<rect x="2834.75" y="868.5" width="6" height="4" fill="#555a60" />
<rect x="2844.75" y="876.5" width="6" height="4" fill="#555a60" />
<rect x="2824.75" y="878.5" width="6" height="4" fill="#555a60" />
<line x1="2740" y1="850" x2="2800" y2="880" stroke="#e8e8e8" stroke-width="7" />
<polyline points="2705,838 2745,828 2772,840 2735,850 2705,838" fill="none" stroke="#c8620a" stroke-width="2" />
<polyline points="2790,878 2840,862 2872,874 2822,890 2790,878" fill="none" stroke="#c8620a" stroke-width="2" />
<line x1="2253.7" y1="256" x2="2327" y2="235" stroke="#c8620a" stroke-width="2" />
<polyline points="2293.7,258 2344.7,243.3 2364.7,265 2312,279.7 2293.7,258" fill="none" stroke="#c8620a" stroke-width="2" />
<line x1="2253.7" y1="256" x2="2253.7" y2="588" stroke="#c8620a" stroke-width="2" />
<line x1="2274.8" y1="250" x2="2274.8" y2="588" stroke="#c8620a" stroke-width="2" />
<line x1="2294.5" y1="258" x2="2294.5" y2="588" stroke="#c8620a" stroke-width="2" />
<line x1="2306.5" y1="240" x2="2306.5" y2="588" stroke="#c8620a" stroke-width="2" />
<line x1="2312" y1="279.7" x2="2312" y2="588" stroke="#c8620a" stroke-width="2" />
<line x1="2327" y1="235" x2="2327" y2="588" stroke="#c8620a" stroke-width="2" />
<line x1="2344.7" y1="243.3" x2="2344.7" y2="588" stroke="#c8620a" stroke-width="2" />
<line x1="2364.7" y1="265" x2="2364.7" y2="588" stroke="#c8620a" stroke-width="2" />
<polygon points="2243,585 2310,567 2376,600 2322,616" fill="#5a5c60" stroke="#f4f4f4" stroke-width="3" />
<polygon points="2250,585 2300,572 2330,588 2282,602" fill="#b8b8bc" stroke="#e0e0e0" stroke-width="2" />
<polygon points="2275,570 2327,553 2327,585 2275,600" fill="#a0a0a4" stroke="#f4f4f4" stroke-width="2" />
<rect x="2290" y="575" width="5" height="5" fill="#ffffff" />
<rect x="2312" y="566" width="5" height="5" fill="#ffffff" />
<rect x="2340" y="582" width="5" height="5" fill="#ffffff" />
<line x1="2492.8" y1="476" x2="2492.8" y2="1030" stroke="#5a8cf4" stroke-width="2" />
<line x1="2150.8" y1="705" x2="2663" y2="914.8" stroke="#10c010" stroke-width="2" />
<line x1="2313.7" y1="894.6" x2="2848" y2="743" stroke="#e00c0c" stroke-width="2" />
<rect x="2487.0" y="839.0" width="11" height="11" fill="none" stroke="#e00c0c" stroke-width="2" />
<text x="2492" y="469" font-size="50" fill="#5a8cf4" text-anchor="middle" font-weight="bold" stroke="#5a8cf4" stroke-width="2.5" stroke-linejoin="miter">Z</text>
<text x="2129" y="714" font-size="50" fill="#10c010" text-anchor="middle" font-weight="bold" stroke="#10c010" stroke-width="2.5" stroke-linejoin="miter">Y</text>
<text x="2870" y="755" font-size="50" fill="#e00c0c" text-anchor="middle" font-weight="bold" stroke="#e00c0c" stroke-width="2.5" stroke-linejoin="miter">X</text>
<line x1="2630.5" y1="1712" x2="2630.5" y2="1843" stroke="#5a8cf4" stroke-width="4" />
<polygon points="2621,1734 2630.5,1696 2640,1734 2630.5,1724" fill="#5a8cf4" stroke="none" stroke-width="2" />
<text x="2630" y="1694" font-size="50" fill="#5a8cf4" text-anchor="middle" font-weight="bold" stroke="#5a8cf4" stroke-width="2.5" stroke-linejoin="miter">Z</text>
<text x="2489" y="1842" font-size="50" fill="#10c010" text-anchor="middle" font-weight="bold" stroke="#10c010" stroke-width="2.5" stroke-linejoin="miter">Y</text>
<polygon points="2500,1828 2520,1826 2514,1832 2545,1843 2530,1843 2510,1836 2506,1842" fill="#10c010" stroke="none" stroke-width="2" />
<text x="2803" y="1850" font-size="50" fill="#e00c0c" text-anchor="middle" font-weight="bold" stroke="#e00c0c" stroke-width="2.5" stroke-linejoin="miter">X</text>
<polygon points="2752,1837 2790,1832 2788,1843 2760,1843" fill="#e00c0c" stroke="none" stroke-width="2" />
</g>
<defs><linearGradient id="gw" x1="0" y1="0" x2="1" y2="1"><stop offset="0" stop-color="#ffffff"/><stop offset="1" stop-color="#9cc0e4"/></linearGradient><linearGradient id="gwv" x1="0" y1="0" x2="0" y2="1"><stop offset="0" stop-color="#f4f8fc"/><stop offset="1" stop-color="#7aa4d0"/></linearGradient><linearGradient id="gbar" x1="0" y1="0" x2="1" y2="0"><stop offset="0" stop-color="#ffffff"/><stop offset="1" stop-color="#7ea6cc"/></linearGradient><linearGradient id="ggr" x1="0" y1="0" x2="1" y2="1"><stop offset="0" stop-color="#66d860"/><stop offset="1" stop-color="#20a030"/></linearGradient><linearGradient id="gor" x1="0" y1="0" x2="1" y2="1"><stop offset="0" stop-color="#f8c880"/><stop offset="1" stop-color="#d87820"/></linearGradient><linearGradient id="gwood" x1="0" y1="0" x2="1" y2="1"><stop offset="0" stop-color="#f0b860"/><stop offset="1" stop-color="#b86818"/></linearGradient><linearGradient id="glb" x1="0" y1="0" x2="1" y2="0"><stop offset="0" stop-color="#c8e0f8"/><stop offset="1" stop-color="#6a9ccc"/></linearGradient></defs>
<rect x="8.5" y="98" width="2.5" height="2.5" fill="#625e58" />
<rect x="12.5" y="98" width="2.5" height="2.5" fill="#625e58" />
<rect x="8.5" y="102" width="2.5" height="2.5" fill="#625e58" />
<rect x="12.5" y="102" width="2.5" height="2.5" fill="#625e58" />
<rect x="8.5" y="106" width="2.5" height="2.5" fill="#625e58" />
<rect x="12.5" y="106" width="2.5" height="2.5" fill="#625e58" />
<rect x="8.5" y="110" width="2.5" height="2.5" fill="#625e58" />
<rect x="12.5" y="110" width="2.5" height="2.5" fill="#625e58" />
<rect x="8.5" y="114" width="2.5" height="2.5" fill="#625e58" />
<rect x="12.5" y="114" width="2.5" height="2.5" fill="#625e58" />
<rect x="8.5" y="118" width="2.5" height="2.5" fill="#625e58" />
<rect x="12.5" y="118" width="2.5" height="2.5" fill="#625e58" />
<rect x="8.5" y="122" width="2.5" height="2.5" fill="#625e58" />
<rect x="12.5" y="122" width="2.5" height="2.5" fill="#625e58" />
<rect x="8.5" y="126" width="2.5" height="2.5" fill="#625e58" />
<rect x="12.5" y="126" width="2.5" height="2.5" fill="#625e58" />
<rect x="26" y="99" width="28" height="28" fill="#4a7ab0" />
<rect x="30" y="102" width="20" height="8" fill="#9ec0e8" />
<rect x="38" y="102" width="4" height="8" fill="#4a7ab0" />
<rect x="30" y="113" width="20" height="12" fill="#e8f0f8" />
<rect x="76" y="99" width="28" height="28" fill="#4a7ab0" />
<rect x="80" y="102" width="20" height="8" fill="#9ec0e8" />
<rect x="88" y="102" width="4" height="8" fill="#4a7ab0" />
<rect x="80" y="113" width="20" height="12" fill="#e8f0f8" />
<polygon points="88,116 98,116 98,111 106,119 98,127 98,122 88,122" fill="#f0f0f0" stroke="#606060" stroke-width="1.5" />
<path d="M134 119 Q142 106 150 107 Q156 109 151 122" fill="none" stroke="#6aa0d8" stroke-width="4"/>
<polygon points="127,122 132,111 140,119" fill="#6aa0d8" stroke="none" stroke-width="2" />
<path d="M197 119 Q189 106 181 107 Q175 109 180 122" fill="none" stroke="#38a878" stroke-width="4"/>
<polygon points="204,122 199,111 191,119" fill="#38a878" stroke="none" stroke-width="2" />
<rect x="224" y="99" width="14" height="5" fill="#b08830" />
<rect x="224" y="103" width="31" height="24" fill="#b08830" />
<rect x="226" y="105" width="27" height="20" fill="#f4d870" />
<path d="M232 119 Q238 108 247 113 Q250 120 242 122" fill="none" stroke="#2e86d8" stroke-width="2.5"/>
<polygon points="230,112 230,122 238,120" fill="#2e86d8" stroke="none" stroke-width="2" />
<rect x="274" y="90" width="3" height="48" fill="#6a6866" />
<rect x="299" y="100" width="10" height="6" fill="#3ab040" />
<rect x="303" y="98" width="3" height="5" fill="#e82828" />
<rect x="295" y="104" width="18" height="14" fill="#d8e8f4" />
<rect x="295" y="104" width="18" height="4" fill="#40b848" />
<rect x="289" y="116" width="22" height="12" fill="#e0ecf4" />
<rect x="307" y="112" width="14" height="18" fill="#e8f0f8" />
<rect x="310" y="115" width="9" height="2" fill="#4a7ab0" />
<rect x="310" y="119" width="9" height="2" fill="#4a7ab0" />
<rect x="310" y="123" width="9" height="2" fill="#4a7ab0" />
<rect x="310" y="127" width="9" height="2" fill="#4a7ab0" />
<rect x="297" y="110" width="6" height="4" fill="#4a7ab0" />
<rect x="340" y="90" width="3" height="48" fill="#6a6866" />
<rect x="363.5" y="100" width="18" height="26" fill="#a0a0a0" />
<polygon points="369.5,102 381.5,99 381.5,128 369.5,126" fill="#30c0c8" stroke="none" stroke-width="2" />
<rect x="357.5" y="108" width="12" height="3" fill="#e82828" />
<polygon points="365.5,104 371.5,109.5 365.5,115" fill="#e82828" stroke="none" stroke-width="2" />
<rect x="355.5" y="124" width="32" height="2" fill="#909090" />
<rect x="405.5" y="90" width="3" height="48" fill="#6a6866" />
<rect x="423.0" y="100.5" width="29" height="26" fill="none" stroke="#e0e0e0" stroke-width="3" />
<rect x="426.5" y="105" width="5" height="5" fill="#e0e0e0" />
<rect x="426.5" y="115" width="5" height="5" fill="#e0e0e0" />
<rect x="435.5" y="105" width="10" height="14" fill="#c8d8e8" />
<rect x="437.5" y="112" width="14" height="17" fill="#f0f4f8" />
<rect x="440.5" y="117" width="10" height="2" fill="#4a7ab0" />
<rect x="440.5" y="121" width="10" height="2" fill="#4a7ab0" />
<rect x="440.5" y="125" width="10" height="2" fill="#4a7ab0" />
<rect x="473.5" y="98" width="2.5" height="2.5" fill="#625e58" />
<rect x="477.5" y="98" width="2.5" height="2.5" fill="#625e58" />
<rect x="473.5" y="102" width="2.5" height="2.5" fill="#625e58" />
<rect x="477.5" y="102" width="2.5" height="2.5" fill="#625e58" />
<rect x="473.5" y="106" width="2.5" height="2.5" fill="#625e58" />
<rect x="477.5" y="106" width="2.5" height="2.5" fill="#625e58" />
<rect x="473.5" y="110" width="2.5" height="2.5" fill="#625e58" />
<rect x="477.5" y="110" width="2.5" height="2.5" fill="#625e58" />
<rect x="473.5" y="114" width="2.5" height="2.5" fill="#625e58" />
<rect x="477.5" y="114" width="2.5" height="2.5" fill="#625e58" />
<rect x="473.5" y="118" width="2.5" height="2.5" fill="#625e58" />
<rect x="477.5" y="118" width="2.5" height="2.5" fill="#625e58" />
<rect x="473.5" y="122" width="2.5" height="2.5" fill="#625e58" />
<rect x="477.5" y="122" width="2.5" height="2.5" fill="#625e58" />
<rect x="473.5" y="126" width="2.5" height="2.5" fill="#625e58" />
<rect x="477.5" y="126" width="2.5" height="2.5" fill="#625e58" />
<polyline points="491.7,126 519.7,126 513.7,116 501.7,124" fill="none" stroke="#d0d0d0" stroke-width="3" />
<line x1="491.7" y1="126" x2="519.7" y2="106" stroke="#d0d0d0" stroke-width="3" />
<line x1="541" y1="124" x2="555" y2="104" stroke="#d0d0d0" stroke-width="2" stroke-dasharray="2,2"/>
<line x1="547" y1="124" x2="561" y2="104" stroke="#d0d0d0" stroke-width="2" stroke-dasharray="2,2"/>
<line x1="553" y1="124" x2="567" y2="104" stroke="#d0d0d0" stroke-width="2" stroke-dasharray="2,2"/>
<line x1="559" y1="124" x2="573" y2="104" stroke="#d0d0d0" stroke-width="2" stroke-dasharray="2,2"/>
<polyline points="543,126 563,114 569,120" fill="none" stroke="#d0d0d0" stroke-width="2" />
<polyline points="591.7,104 619.7,104 619.7,114 601.7,114" fill="none" stroke="#d0d0d0" stroke-width="3" />
<line x1="591.7" y1="112" x2="603.7" y2="112" stroke="#d0d0d0" stroke-width="3" />
<line x1="591.7" y1="120" x2="603.7" y2="120" stroke="#d0d0d0" stroke-width="3" />
<line x1="591.7" y1="126" x2="619.7" y2="126" stroke="#d0d0d0" stroke-width="3" />
<polyline points="644,128 644,102 670,102 670,128 652,128 652,110 662,110 662,120" fill="none" stroke="#a0a0a0" stroke-width="3" />
<rect x="692.6" y="100" width="3" height="3" fill="#2e86d8" />
<rect x="692.6" y="107" width="3" height="3" fill="#2e86d8" />
<rect x="692.6" y="114" width="3" height="3" fill="#2e86d8" />
<rect x="692.6" y="121" width="3" height="3" fill="#2e86d8" />
<rect x="692.6" y="128" width="3" height="3" fill="#2e86d8" />
<line x1="697.6" y1="115" x2="711.6" y2="115" stroke="#2e86d8" stroke-width="2" />
<polygon points="709.6,110 717.6,115 709.6,120" fill="#2e86d8" stroke="none" stroke-width="2" />
<rect x="717.6" y="100" width="4" height="4" fill="#2e86d8" />
<rect x="717.6" y="107" width="4" height="4" fill="#2e86d8" />
<rect x="717.6" y="114" width="4" height="4" fill="#2e86d8" />
<rect x="717.6" y="121" width="4" height="4" fill="#2e86d8" />
<rect x="717.6" y="128" width="4" height="4" fill="#2e86d8" />
<rect x="742.7" y="100" width="3" height="3" fill="#a0a0a0" />
<rect x="742.7" y="107" width="3" height="3" fill="#a0a0a0" />
<rect x="742.7" y="114" width="3" height="3" fill="#a0a0a0" />
<rect x="742.7" y="121" width="3" height="3" fill="#a0a0a0" />
<rect x="742.7" y="128" width="3" height="3" fill="#a0a0a0" />
<line x1="747.7" y1="115" x2="761.7" y2="115" stroke="#2e86d8" stroke-width="2" />
<polygon points="759.7,110 767.7,115 759.7,120" fill="#2e86d8" stroke="none" stroke-width="2" />
<rect x="767.7" y="100" width="4" height="4" fill="#a0a0a0" />
<rect x="767.7" y="107" width="4" height="4" fill="#a0a0a0" />
<rect x="767.7" y="114" width="4" height="4" fill="#a0a0a0" />
<rect x="767.7" y="121" width="4" height="4" fill="#a0a0a0" />
<rect x="767.7" y="128" width="4" height="4" fill="#a0a0a0" />
<polygon points="791.6,108 798.6,100 822.6,100 822.6,128 791.6,128" fill="url(#gwv)" stroke="#5a80a8" stroke-width="2" />
<rect x="842.5" y="98" width="2.5" height="2.5" fill="#625e58" />
<rect x="846.5" y="98" width="2.5" height="2.5" fill="#625e58" />
<rect x="842.5" y="102" width="2.5" height="2.5" fill="#625e58" />
<rect x="846.5" y="102" width="2.5" height="2.5" fill="#625e58" />
<rect x="842.5" y="106" width="2.5" height="2.5" fill="#625e58" />
<rect x="846.5" y="106" width="2.5" height="2.5" fill="#625e58" />
<rect x="842.5" y="110" width="2.5" height="2.5" fill="#625e58" />
<rect x="846.5" y="110" width="2.5" height="2.5" fill="#625e58" />
<rect x="842.5" y="114" width="2.5" height="2.5" fill="#625e58" />
<rect x="846.5" y="114" width="2.5" height="2.5" fill="#625e58" />
<rect x="842.5" y="118" width="2.5" height="2.5" fill="#625e58" />
<rect x="846.5" y="118" width="2.5" height="2.5" fill="#625e58" />
<rect x="842.5" y="122" width="2.5" height="2.5" fill="#625e58" />
<rect x="846.5" y="122" width="2.5" height="2.5" fill="#625e58" />
<rect x="842.5" y="126" width="2.5" height="2.5" fill="#625e58" />
<rect x="846.5" y="126" width="2.5" height="2.5" fill="#625e58" />
<polygon points="869,99 879,99 879,109 889,109 889,119 879,119 879,129 869,129 869,119 859,119 859,109 869,109" fill="#b8d4f4" stroke="#4a6a90" stroke-width="2" />
<rect x="907.8" y="100" width="10" height="30" fill="#5a80a8" />
<rect x="909.8" y="102" width="6" height="26" fill="url(#gbar)" />
<polygon points="928.8,115 920.8,108 920.8,122" fill="#2e86d8" stroke="none" stroke-width="2" />
<rect x="929.8" y="100" width="10" height="30" fill="#f030f0" />
<rect x="931.8" y="102" width="6" height="26" fill="url(#gbar)" />
<rect x="957.5" y="90" width="3" height="48" fill="#6a6866" />
<rect x="974" y="99" width="10" height="14" fill="#f030f0" />
<rect x="976" y="101" width="6" height="10" fill="url(#gbar)" />
<rect x="988" y="98" width="12" height="20" fill="#f030f0" />
<rect x="990" y="100" width="8" height="16" fill="url(#gbar)" />
<rect x="982" y="106" width="10" height="14" fill="#5a80a8" />
<rect x="984" y="108" width="6" height="10" fill="url(#gbar)" />
<rect x="976" y="118" width="12" height="12" fill="#f030f0" />
<rect x="978" y="120" width="8" height="8" fill="url(#gbar)" />
<rect x="1024" y="100" width="10" height="30" fill="#f030f0" />
<rect x="1026" y="102" width="6" height="26" fill="url(#gbar)" />
<rect x="1046" y="100" width="10" height="30" fill="#5a80a8" />
<rect x="1048" y="102" width="6" height="26" fill="url(#gbar)" />
<polygon points="1035,107 1043,101 1043,113" fill="#e82828" stroke="none" stroke-width="2" />
<polygon points="1035,123 1043,117 1043,129" fill="#e82828" stroke="none" stroke-width="2" />
<rect x="1041" y="105" width="4" height="4" fill="#e82828" />
<rect x="1041" y="121" width="4" height="4" fill="#e82828" />
<rect x="1073.7" y="100" width="10" height="30" fill="#f030f0" />
<rect x="1075.7" y="102" width="6" height="26" fill="url(#gbar)" />
<rect x="1095.7" y="100" width="10" height="30" fill="#5a80a8" />
<rect x="1097.7" y="102" width="6" height="26" fill="url(#gbar)" />
<polygon points="1085.7,110 1093.7,115 1085.7,120" fill="#e82828" stroke="none" stroke-width="2" />
<rect x="1123.7" y="106" width="10" height="24" fill="#5a80a8" />
<rect x="1125.7" y="108" width="6" height="20" fill="url(#gbar)" />
<rect x="1141.7" y="98" width="12" height="26" fill="#f030f0" />
<rect x="1143.7" y="100" width="8" height="22" fill="url(#gbar)" />
<rect x="1140.7" y="103.0" width="8" height="8" fill="#ffffff" stroke="#e82828" stroke-width="2" />
<rect x="1175.4" y="102" width="14" height="3" fill="#6a86a8" />
<rect x="1175.4" y="107" width="14" height="3" fill="#6a86a8" />
<rect x="1175.4" y="112" width="14" height="3" fill="#6a86a8" />
<polyline points="1191.4,100 1203.4,104 1191.4,108" fill="none" stroke="#6a86a8" stroke-width="2" />
<line x1="1189.4" y1="112" x2="1205.4" y2="112" stroke="#6a86a8" stroke-width="2" />
<polyline points="1185.4,116 1175.4,122 1185.4,128" fill="none" stroke="#6a86a8" stroke-width="2" />
<polyline points="1193.4,116 1187.4,122 1193.4,128" fill="none" stroke="#6a86a8" stroke-width="2" />
<polyline points="1197.4,116 1203.4,122 1197.4,128" fill="none" stroke="#6a86a8" stroke-width="2" />
<rect x="1223.5" y="90" width="3" height="48" fill="#6a6866" />
<rect x="1240" y="100" width="10" height="30" fill="#f030f0" />
<rect x="1242" y="102" width="6" height="26" fill="url(#gbar)" />
<rect x="1262" y="101" width="9" height="28" fill="none" stroke="#5a80a8" stroke-width="2" stroke-dasharray="2,2"/>
<line x1="1250" y1="115" x2="1260" y2="115" stroke="#2e86d8" stroke-width="3" />
<polygon points="1256,109 1264,115 1256,121" fill="#2e86d8" stroke="none" stroke-width="2" />
<rect x="1289.8" y="100" width="10" height="30" fill="#5a80a8" />
<rect x="1291.8" y="102" width="6" height="26" fill="url(#gbar)" />
<rect x="1291.8" y="102" width="6" height="26" fill="#b8b8b8" />
<rect x="1311.8" y="101" width="9" height="28" fill="none" stroke="#5a80a8" stroke-width="2" stroke-dasharray="2,2"/>
<line x1="1299.8" y1="115" x2="1309.8" y2="115" stroke="#2e86d8" stroke-width="3" />
<polygon points="1305.8,109 1313.8,115 1305.8,121" fill="#2e86d8" stroke="none" stroke-width="2" />
<rect x="1340.7" y="101" width="9" height="28" fill="none" stroke="#5a80a8" stroke-width="2" stroke-dasharray="2,2"/>
<line x1="1349.7" y1="115" x2="1357.7" y2="115" stroke="#2e86d8" stroke-width="3" />
<polygon points="1353.7,109 1361.7,115 1353.7,121" fill="#2e86d8" stroke="none" stroke-width="2" />
<rect x="1361.7" y="100" width="10" height="30" fill="#5a80a8" />
<rect x="1363.7" y="102" width="6" height="26" fill="url(#gbar)" />
<rect x="1363.7" y="102" width="6" height="26" fill="#b8b8b8" />
<rect x="1390.7" y="101" width="9" height="28" fill="none" stroke="#5a80a8" stroke-width="2" stroke-dasharray="2,2"/>
<line x1="1399.7" y1="115" x2="1407.7" y2="115" stroke="#2e86d8" stroke-width="3" />
<polygon points="1403.7,109 1411.7,115 1403.7,121" fill="#2e86d8" stroke="none" stroke-width="2" />
<rect x="1411.7" y="100" width="10" height="30" fill="#2e86d8" />
<rect x="1413.7" y="102" width="6" height="26" fill="url(#gbar)" />
<rect x="1440" y="90" width="3" height="48" fill="#6a6866" />
<polygon points="1458,104 1466,98 1488,98 1474,118 1458,118" fill="url(#gwood)" stroke="#a0a0a0" stroke-width="2" />
<rect x="1460" y="106" width="12" height="12" fill="#c07020" />
<line x1="1462" y1="110" x2="1470" y2="114" stroke="#8a4a10" stroke-width="2" />
<line x1="1472" y1="102" x2="1482" y2="104" stroke="#a05a18" stroke-width="2" />
<text x="1472" y="132" font-size="14" fill="#b0b0b0" textLength="16" lengthAdjust="spacingAndGlyphs" >GL</text>
<rect x="1506" y="90" width="3" height="48" fill="#6a6866" />
<text x="1522" y="110" font-size="14" fill="#b0b0b0" textLength="14" lengthAdjust="spacingAndGlyphs" >GL</text>
<polygon points="1524,128 1544,102 1554,102 1554,128 1548,128 1548,118 1536,128" fill="url(#gwood)" stroke="#a0a0a0" stroke-width="2" />
<rect x="1573.5" y="98" width="2.5" height="2.5" fill="#625e58" />
<rect x="1577.5" y="98" width="2.5" height="2.5" fill="#625e58" />
<rect x="1573.5" y="102" width="2.5" height="2.5" fill="#625e58" />
<rect x="1577.5" y="102" width="2.5" height="2.5" fill="#625e58" />
<rect x="1573.5" y="106" width="2.5" height="2.5" fill="#625e58" />
<rect x="1577.5" y="106" width="2.5" height="2.5" fill="#625e58" />
<rect x="1573.5" y="110" width="2.5" height="2.5" fill="#625e58" />
<rect x="1577.5" y="110" width="2.5" height="2.5" fill="#625e58" />
<rect x="1573.5" y="114" width="2.5" height="2.5" fill="#625e58" />
<rect x="1577.5" y="114" width="2.5" height="2.5" fill="#625e58" />
<rect x="1573.5" y="118" width="2.5" height="2.5" fill="#625e58" />
<rect x="1577.5" y="118" width="2.5" height="2.5" fill="#625e58" />
<rect x="1573.5" y="122" width="2.5" height="2.5" fill="#625e58" />
<rect x="1577.5" y="122" width="2.5" height="2.5" fill="#625e58" />
<rect x="1573.5" y="126" width="2.5" height="2.5" fill="#625e58" />
<rect x="1577.5" y="126" width="2.5" height="2.5" fill="#625e58" />
<polygon points="1598,100 1620,100 1620,122 1612,130 1592,130 1592,106" fill="url(#gw)" stroke="#5a80a8" stroke-width="2" />
<line x1="1606" y1="98" x2="1606" y2="132" stroke="#2e86d8" stroke-width="3" />
<line x1="1590" y1="115" x2="1622" y2="115" stroke="#2e86d8" stroke-width="3" />
<rect x="1600" y="109" width="12" height="12" fill="#e8f4ff" />
<rect x="1603" y="112" width="6" height="6" fill="#2e86d8" />
<polygon points="1644,108 1652,100 1672,100 1672,120 1664,128 1644,128" fill="url(#gw)" stroke="#5a80a8" stroke-width="2" />
<polyline points="1644,108 1664,108 1672,100" fill="none" stroke="#5a80a8" stroke-width="2" />
<line x1="1664" y1="108" x2="1664" y2="128" stroke="#5a80a8" stroke-width="2" />
<polygon points="1646,126 1652,120 1670,120 1664,126" fill="#6a9ccc" stroke="none" stroke-width="2" />
<polygon points="1694,108 1702,100 1722,100 1722,120 1714,128 1694,128" fill="url(#gw)" stroke="#5a80a8" stroke-width="2" />
<rect x="1694" y="108" width="20" height="20" fill="#6a96c4" />
<polygon points="1744,108 1752,100 1772,100 1772,120 1764,128 1744,128" fill="url(#gw)" stroke="#5a80a8" stroke-width="2" />
<polyline points="1744,108 1764,108 1772,100" fill="none" stroke="#5a80a8" stroke-width="2" />
<line x1="1764" y1="108" x2="1764" y2="128" stroke="#5a80a8" stroke-width="2" />
<rect x="1790" y="98" width="18" height="2" fill="#909090" />
<line x1="1796" y1="102" x2="1796" y2="120" stroke="#2e86d8" stroke-width="3" />
<polygon points="1791,108 1796,101 1801,108" fill="#2e86d8" stroke="none" stroke-width="2" />
<polygon points="1800,110 1806,104 1822,104 1822,122 1816,128 1800,128" fill="url(#gw)" stroke="#5a80a8" stroke-width="2" />
<rect x="1800" y="110" width="16" height="18" fill="#6a96c4" />
<polygon points="1846,100 1868,100 1868,120 1860,128 1842,128 1842,106" fill="url(#gw)" stroke="#5a80a8" stroke-width="2" />
<line x1="1854" y1="98" x2="1854" y2="130" stroke="#2e86d8" stroke-width="3" />
<line x1="1840" y1="114" x2="1868" y2="114" stroke="#2e86d8" stroke-width="3" />
<rect x="1858" y="114" width="14" height="16" fill="#e8f0f8" />
<rect x="1860" y="116" width="11" height="2" fill="#4a7ab0" />
<rect x="1860" y="120" width="11" height="2" fill="#4a7ab0" />
<rect x="1860" y="124" width="11" height="2" fill="#4a7ab0" />
<rect x="1860" y="128" width="11" height="2" fill="#4a7ab0" />
<polygon points="1888,114 1898,114 1893,120" fill="#a0a0a0" stroke="none" stroke-width="2" />
<polygon points="1926,100 1948,100 1948,120 1940,128 1922,128 1922,106" fill="url(#gw)" stroke="#5a80a8" stroke-width="2" />
<line x1="1934" y1="98" x2="1934" y2="130" stroke="#2e86d8" stroke-width="3" />
<line x1="1920" y1="114" x2="1948" y2="114" stroke="#2e86d8" stroke-width="3" />
<rect x="1938" y="114" width="14" height="16" fill="#e8f0f8" />
<rect x="1940" y="116" width="11" height="2" fill="#4a7ab0" />
<rect x="1940" y="120" width="11" height="2" fill="#4a7ab0" />
<rect x="1940" y="124" width="11" height="2" fill="#4a7ab0" />
<rect x="1940" y="128" width="11" height="2" fill="#4a7ab0" />
<rect x="1948" y="119" width="14" height="18" fill="#ffff00" />
<text x="1955" y="135" font-size="17" fill="#000000" text-anchor="middle" font-weight="bold" >1</text>
<polygon points="1976,100 1998,100 1998,120 1990,128 1972,128 1972,106" fill="url(#gw)" stroke="#5a80a8" stroke-width="2" />
<line x1="1984" y1="98" x2="1984" y2="130" stroke="#2e86d8" stroke-width="3" />
<line x1="1970" y1="114" x2="1998" y2="114" stroke="#2e86d8" stroke-width="3" />
<rect x="1988" y="114" width="14" height="16" fill="#e8f0f8" />
<rect x="1990" y="116" width="11" height="2" fill="#4a7ab0" />
<rect x="1990" y="120" width="11" height="2" fill="#4a7ab0" />
<rect x="1990" y="124" width="11" height="2" fill="#4a7ab0" />
<rect x="1990" y="128" width="11" height="2" fill="#4a7ab0" />
<rect x="1998" y="119" width="14" height="18" fill="#ffff00" />
<text x="2005" y="135" font-size="17" fill="#000000" text-anchor="middle" font-weight="bold" >2</text>
<rect x="2020" y="90" width="3" height="48" fill="#6a6866" />
<polygon points="2038,100 2046,100 2054,104 2054,130 2046,126 2038,126" fill="#eeeef8" stroke="#2e86d8" stroke-width="2" />
<line x1="2046" y1="102" x2="2046" y2="128" stroke="#c0c0c0" stroke-width="2" />
<rect x="2056" y="98" width="16" height="2" fill="#6a6a6a" />
<line x1="2061" y1="102" x2="2061" y2="114" stroke="#2e86d8" stroke-width="3" />
<polygon points="2056,108 2061,101 2066,108" fill="#2e86d8" stroke="none" stroke-width="2" />
<rect x="2056" y="118" width="12" height="12" fill="#6a96c4" />
<polygon points="2087.5,100 2095.5,100 2103.5,104 2103.5,130 2095.5,126 2087.5,126" fill="#eeeef8" stroke="#2e86d8" stroke-width="2" />
<line x1="2095.5" y1="102" x2="2095.5" y2="128" stroke="#c0c0c0" stroke-width="2" />
<polygon points="2103.5,120 2109.5,108 2117.5,122" fill="#e82828" stroke="none" stroke-width="2" />
<polygon points="2106.5,119 2109.5,113 2113.5,119" fill="#ffffff" stroke="none" stroke-width="2" />
<rect x="8.5" y="151" width="2.5" height="2.5" fill="#625e58" />
<rect x="12.5" y="151" width="2.5" height="2.5" fill="#625e58" />
<rect x="8.5" y="155" width="2.5" height="2.5" fill="#625e58" />
<rect x="12.5" y="155" width="2.5" height="2.5" fill="#625e58" />
<rect x="8.5" y="159" width="2.5" height="2.5" fill="#625e58" />
<rect x="12.5" y="159" width="2.5" height="2.5" fill="#625e58" />
<rect x="8.5" y="163" width="2.5" height="2.5" fill="#625e58" />
<rect x="12.5" y="163" width="2.5" height="2.5" fill="#625e58" />
<rect x="8.5" y="167" width="2.5" height="2.5" fill="#625e58" />
<rect x="12.5" y="167" width="2.5" height="2.5" fill="#625e58" />
<rect x="8.5" y="171" width="2.5" height="2.5" fill="#625e58" />
<rect x="12.5" y="171" width="2.5" height="2.5" fill="#625e58" />
<rect x="8.5" y="175" width="2.5" height="2.5" fill="#625e58" />
<rect x="12.5" y="175" width="2.5" height="2.5" fill="#625e58" />
<rect x="8.5" y="179" width="2.5" height="2.5" fill="#625e58" />
<rect x="12.5" y="179" width="2.5" height="2.5" fill="#625e58" />
<rect x="17.0" y="145.0" width="350" height="40" fill="#374b5c" stroke="#6a6866" stroke-width="2" />
<rect x="256" y="146" width="2" height="38" fill="#6a6866" />
<rect x="226" y="153" width="2" height="26" fill="#a8a8a8" />
<rect x="338" y="153" width="2" height="26" fill="#a8a8a8" />
<rect x="239" y="157" width="8" height="9" fill="#3aa0dc" />
<polygon points="233,165 253,165 243,175" fill="#3aa0dc" stroke="none" stroke-width="2" />
<rect x="351" y="157" width="8" height="9" fill="#3aa0dc" />
<polygon points="345,165 365,165 355,175" fill="#3aa0dc" stroke="none" stroke-width="2" />
<text x="23.8" y="174.2" font-size="23" fill="#c8cccd" textLength="190" lengthAdjust="spacingAndGlyphs" >Toit Structure F8</text>
<text x="264" y="174.2" font-size="23" fill="#c8cccd" textLength="14.1" lengthAdjust="spacingAndGlyphs" >0</text>
<rect x="378.5" y="151" width="2.5" height="2.5" fill="#625e58" />
<rect x="382.5" y="151" width="2.5" height="2.5" fill="#625e58" />
<rect x="378.5" y="155" width="2.5" height="2.5" fill="#625e58" />
<rect x="382.5" y="155" width="2.5" height="2.5" fill="#625e58" />
<rect x="378.5" y="159" width="2.5" height="2.5" fill="#625e58" />
<rect x="382.5" y="159" width="2.5" height="2.5" fill="#625e58" />
<rect x="378.5" y="163" width="2.5" height="2.5" fill="#625e58" />
<rect x="382.5" y="163" width="2.5" height="2.5" fill="#625e58" />
<rect x="378.5" y="167" width="2.5" height="2.5" fill="#625e58" />
<rect x="382.5" y="167" width="2.5" height="2.5" fill="#625e58" />
<rect x="378.5" y="171" width="2.5" height="2.5" fill="#625e58" />
<rect x="382.5" y="171" width="2.5" height="2.5" fill="#625e58" />
<rect x="378.5" y="175" width="2.5" height="2.5" fill="#625e58" />
<rect x="382.5" y="175" width="2.5" height="2.5" fill="#625e58" />
<rect x="378.5" y="179" width="2.5" height="2.5" fill="#625e58" />
<rect x="382.5" y="179" width="2.5" height="2.5" fill="#625e58" />
<rect x="400" y="152" width="20" height="27" fill="#4a6a90" />
<rect x="402" y="154" width="16" height="23" fill="url(#gor)" />
<circle cx="460" cy="166" r="14" fill="url(#gor)" stroke="#4a6a90" stroke-width="2"/>
<rect x="493.5" y="142" width="3" height="48" fill="#6a6866" />
<rect x="510" y="151" width="8" height="8" fill="#c8d8e8" />
<rect x="511.0" y="152.0" width="6" height="6" fill="none" stroke="#4a7ab0" stroke-width="2" />
<rect x="534" y="151" width="8" height="8" fill="#c8d8e8" />
<rect x="535.0" y="152.0" width="6" height="6" fill="none" stroke="#4a7ab0" stroke-width="2" />
<line x1="518" y1="155" x2="530" y2="155" stroke="#e82828" stroke-width="2" />
<polygon points="526,151 532,155 526,159" fill="#e82828" stroke="none" stroke-width="2" />
<rect x="524" y="149" width="3" height="4" fill="#e82828" />
<rect x="516" y="163" width="20" height="20" fill="#ffffff" />
<line x1="526" y1="165" x2="526" y2="181" stroke="#909090" stroke-width="2" />
<line x1="518" y1="173" x2="534" y2="173" stroke="#909090" stroke-width="2" />
<rect x="522.75" y="169.75" width="6.5" height="6.5" fill="none" stroke="#909090" stroke-width="1.5" />
<rect x="559.8" y="151" width="8" height="8" fill="#c8d8e8" />
<rect x="560.8" y="152.0" width="6" height="6" fill="none" stroke="#4a7ab0" stroke-width="2" />
<path d="M573.8 155 Q583.8 153 585.8 163" fill="none" stroke="#e82828" stroke-width="2"/>
<polygon points="580.8,162 590.8,162 585.8,168" fill="#e82828" stroke="none" stroke-width="2" />
<rect x="581.8" y="173" width="10" height="10" fill="#c8d8e8" />
<rect x="582.8" y="174.0" width="8" height="8" fill="none" stroke="#4a7ab0" stroke-width="2" />
<text x="560.8" y="183" font-size="22" fill="#2e86d8" textLength="16" lengthAdjust="spacingAndGlyphs" font-weight="bold" >Z</text>
<rect x="609" y="151" width="8" height="8" fill="#c8d8e8" />
<rect x="610.0" y="152.0" width="6" height="6" fill="none" stroke="#4a7ab0" stroke-width="2" />
<path d="M623 155 Q633 153 635 163" fill="none" stroke="#e82828" stroke-width="2"/>
<polygon points="630,162 640,162 635,168" fill="#e82828" stroke="none" stroke-width="2" />
<rect x="631" y="173" width="10" height="10" fill="#c8d8e8" />
<rect x="632.0" y="174.0" width="8" height="8" fill="none" stroke="#4a7ab0" stroke-width="2" />
<text x="609" y="181" font-size="17" fill="#2e86d8" textLength="20" lengthAdjust="spacingAndGlyphs" >PP</text>
<polygon points="661.6,171 671.6,153 671.6,171" fill="url(#glb)" stroke="#a0a0a0" stroke-width="1.5" />
<polygon points="689.6,171 679.6,153 679.6,171" fill="url(#glb)" stroke="#a0a0a0" stroke-width="1.5" />
<rect x="674.6" y="151" width="2" height="22" fill="#a0a0a0" />
<rect x="674.6" y="171" width="2" height="10" fill="#a0a0a0" />
<rect x="667.6" y="180" width="16" height="2" fill="#a0a0a0" />
<polygon points="711.8,171 721.8,153 721.8,171" fill="url(#glb)" stroke="#a0a0a0" stroke-width="1.5" />
<polygon points="739.8,171 729.8,153 729.8,171" fill="url(#glb)" stroke="#a0a0a0" stroke-width="1.5" />
<rect x="724.8" y="151" width="2" height="22" fill="#2e86d8" />
<text x="710.8" y="184" font-size="15" fill="#a0a0a0" textLength="30" lengthAdjust="spacingAndGlyphs" >PPP</text>
<rect x="760" y="142" width="3" height="48" fill="#6a6866" />
<rect x="777.0" y="160.0" width="8" height="8" fill="#f8e090" stroke="#e82828" stroke-width="2" />
<rect x="790" y="151" width="18" height="18" fill="#ffffff" />
<line x1="799" y1="153" x2="799" y2="167" stroke="#909090" stroke-width="2" />
<line x1="792" y1="160" x2="806" y2="160" stroke="#909090" stroke-width="2" />
<line x1="784" y1="169" x2="798" y2="181" stroke="#e82828" stroke-width="2" />
<rect x="798" y="179" width="4" height="4" fill="#4a7ab0" />
<polyline points="831.6,155 827.6,157 827.6,169 831.6,171" fill="none" stroke="#e82828" stroke-width="2" />
<rect x="836.6" y="154.0" width="20" height="8" fill="#f8d070" stroke="#e82828" stroke-width="2" />
<rect x="834.6" y="158.0" width="20" height="8" fill="#f8e8a0" stroke="#e82828" stroke-width="2" />
<text x="837.6" y="185" font-size="20" fill="#2e86d8" textLength="16" lengthAdjust="spacingAndGlyphs" font-weight="bold" >Z</text>
<polyline points="881.7,155 877.7,157 877.7,169 881.7,171" fill="none" stroke="#e82828" stroke-width="2" />
<rect x="886.7" y="154.0" width="20" height="8" fill="#f8d070" stroke="#e82828" stroke-width="2" />
<rect x="884.7" y="158.0" width="20" height="8" fill="#f8e8a0" stroke="#e82828" stroke-width="2" />
<text x="885.7" y="184" font-size="16" fill="#2e86d8" textLength="22" lengthAdjust="spacingAndGlyphs" >p p</text>
<rect x="926" y="142" width="3" height="48" fill="#6a6866" />
<polygon points="952,155 964,155 958,167 964,179 952,179 958,167" fill="#a8c0d8" stroke="none" stroke-width="2" />
<line x1="944" y1="155" x2="972" y2="179" stroke="#e8a090" stroke-width="4" />
<line x1="972" y1="155" x2="944" y2="179" stroke="#e8a090" stroke-width="4" />
<rect x="993.5" y="151" width="2.5" height="2.5" fill="#625e58" />
<rect x="997.5" y="151" width="2.5" height="2.5" fill="#625e58" />
<rect x="993.5" y="155" width="2.5" height="2.5" fill="#625e58" />
<rect x="997.5" y="155" width="2.5" height="2.5" fill="#625e58" />
<rect x="993.5" y="159" width="2.5" height="2.5" fill="#625e58" />
<rect x="997.5" y="159" width="2.5" height="2.5" fill="#625e58" />
<rect x="993.5" y="163" width="2.5" height="2.5" fill="#625e58" />
<rect x="997.5" y="163" width="2.5" height="2.5" fill="#625e58" />
<rect x="993.5" y="167" width="2.5" height="2.5" fill="#625e58" />
<rect x="997.5" y="167" width="2.5" height="2.5" fill="#625e58" />
<rect x="993.5" y="171" width="2.5" height="2.5" fill="#625e58" />
<rect x="997.5" y="171" width="2.5" height="2.5" fill="#625e58" />
<rect x="993.5" y="175" width="2.5" height="2.5" fill="#625e58" />
<rect x="997.5" y="175" width="2.5" height="2.5" fill="#625e58" />
<rect x="993.5" y="179" width="2.5" height="2.5" fill="#625e58" />
<rect x="997.5" y="179" width="2.5" height="2.5" fill="#625e58" />
<polygon points="1020,183 1020,165 1032,153 1044,153 1044,165 1028,183" fill="url(#ggr)" stroke="#909090" stroke-width="2" />
<line x1="1022" y1="181" x2="1030" y2="155" stroke="#e82828" stroke-width="4" />
<polygon points="1069.5,183 1069.5,165 1081.5,153 1093.5,153 1093.5,165 1077.5,183" fill="url(#ggr)" stroke="#909090" stroke-width="2" />
<line x1="1069.5" y1="165" x2="1069.5" y2="183" stroke="#e82828" stroke-width="4" />
<polygon points="1114,179 1140,153 1142,179" fill="url(#ggr)" stroke="#909090" stroke-width="2" />
<rect x="1114" y="179" width="24" height="4" fill="#e82828" />
<rect x="1164" y="155" width="28" height="24" fill="#909090" />
<rect x="1168" y="157" width="24" height="20" fill="url(#ggr)" />
<rect x="1164" y="155" width="4" height="24" fill="#e82828" />
<rect x="1172.75" y="165.75" width="6.5" height="6.5" fill="none" stroke="#a0a0a0" stroke-width="1.5" />
<rect x="1213.4" y="151" width="28" height="20" fill="#909090" />
<rect x="1215.4" y="153" width="26" height="16" fill="url(#ggr)" />
<rect x="1213.4" y="151" width="4" height="20" fill="#e82828" />
<line x1="1215.4" y1="179" x2="1223.4" y2="179" stroke="#2e86d8" stroke-width="2" />
<line x1="1219.4" y1="173" x2="1219.4" y2="179" stroke="#2e86d8" stroke-width="2" />
<line x1="1225.4" y1="177" x2="1237.4" y2="177" stroke="#2e86d8" stroke-width="2" />
<polygon points="1235.4,173 1241.4,177 1235.4,181" fill="#2e86d8" stroke="none" stroke-width="2" />
<rect x="1260" y="142" width="3" height="48" fill="#6a6866" />
<polygon points="1278,183 1278,159 1284,153 1304,153 1278,179" fill="#a0a0a0" stroke="none" stroke-width="2" />
<polygon points="1284,183 1304,159 1304,183" fill="url(#ggr)" stroke="none" stroke-width="2" />
<line x1="1284" y1="181" x2="1302" y2="161" stroke="#e82828" stroke-width="3" />
<polygon points="1327.7,153 1343.7,153 1343.7,167 1357.7,167 1357.7,183 1327.7,183" fill="url(#ggr)" stroke="#909090" stroke-width="2" />
<line x1="1329.7" y1="181" x2="1343.7" y2="167" stroke="#e82828" stroke-width="2.5" />
<polygon points="1377.8,153 1393.8,153 1393.8,167 1407.8,167 1407.8,183 1377.8,183" fill="url(#ggr)" stroke="#909090" stroke-width="2" />
<line x1="1379.8" y1="181" x2="1393.8" y2="167" stroke="#e82828" stroke-width="2.5" />
<rect x="1405.8" y="173" width="16" height="22" fill="#ffff00" />
<text x="1413.8" y="192" font-size="19" fill="#000000" text-anchor="middle" font-weight="bold" >1</text>
<polygon points="1427.8,153 1443.8,153 1443.8,167 1457.8,167 1457.8,183 1427.8,183" fill="url(#ggr)" stroke="#909090" stroke-width="2" />
<line x1="1429.8" y1="181" x2="1443.8" y2="167" stroke="#e82828" stroke-width="2.5" />
<rect x="1455.8" y="173" width="16" height="22" fill="#ffff00" />
<text x="1463.8" y="192" font-size="19" fill="#000000" text-anchor="middle" font-weight="bold" >2</text>
<rect x="1475.5" y="142" width="3" height="48" fill="#6a6866" />
<rect x="1491.8" y="151" width="32" height="14" fill="#c8c8c8" />
<polygon points="1495.8,165 1507.8,165 1521.8,153 1521.8,183 1495.8,183" fill="url(#ggr)" stroke="#4a6a90" stroke-width="2" />
<polyline points="1495.8,167 1509.8,167 1521.8,157" fill="none" stroke="#e82828" stroke-width="3" />
<rect x="1542" y="142" width="3" height="48" fill="#6a6866" />
<polygon points="1559.7,183 1559.7,165 1573.7,153 1589.7,153 1589.7,165 1573.7,183" fill="url(#glb)" stroke="#909090" stroke-width="2" />
<line x1="1565.7" y1="183" x2="1577.7" y2="155" stroke="#e82828" stroke-width="4" />
<polygon points="1609.8,183 1609.8,165 1623.8,153 1639.8,153 1639.8,165 1623.8,183" fill="url(#glb)" stroke="#909090" stroke-width="2" />
<rect x="1619.8" y="153" width="4" height="30" fill="#e82828" />
<rect x="1657.9" y="155" width="32" height="24" fill="#909090" />
<rect x="1659.9" y="157" width="28" height="20" fill="url(#glb)" />
<rect x="1669.9" y="151" width="4" height="32" fill="#e82828" />
<path d="M1677.9 175 a6 6 0 0 1 8 -6" fill="none" stroke="#a0a0a0" stroke-width="2"/>
<rect x="1707.7" y="151" width="32" height="18" fill="#909090" />
<rect x="1709.7" y="153" width="28" height="14" fill="url(#glb)" />
<rect x="1721.7" y="151" width="4" height="18" fill="#e82828" />
<line x1="1709.7" y1="179" x2="1717.7" y2="179" stroke="#2e86d8" stroke-width="2" />
<line x1="1713.7" y1="173" x2="1713.7" y2="179" stroke="#2e86d8" stroke-width="2" />
<line x1="1721.7" y1="177" x2="1733.7" y2="177" stroke="#2e86d8" stroke-width="2" />
<polygon points="1731.7,173 1737.7,177 1731.7,181" fill="#2e86d8" stroke="none" stroke-width="2" />
<rect x="8.5" y="1926" width="2.5" height="2.5" fill="#625e58" />
<rect x="12.5" y="1926" width="2.5" height="2.5" fill="#625e58" />
<rect x="8.5" y="1930" width="2.5" height="2.5" fill="#625e58" />
<rect x="12.5" y="1930" width="2.5" height="2.5" fill="#625e58" />
<rect x="8.5" y="1934" width="2.5" height="2.5" fill="#625e58" />
<rect x="12.5" y="1934" width="2.5" height="2.5" fill="#625e58" />
<rect x="8.5" y="1938" width="2.5" height="2.5" fill="#625e58" />
<rect x="12.5" y="1938" width="2.5" height="2.5" fill="#625e58" />
<rect x="8.5" y="1942" width="2.5" height="2.5" fill="#625e58" />
<rect x="12.5" y="1942" width="2.5" height="2.5" fill="#625e58" />
<rect x="8.5" y="1946" width="2.5" height="2.5" fill="#625e58" />
<rect x="12.5" y="1946" width="2.5" height="2.5" fill="#625e58" />
<rect x="8.5" y="1950" width="2.5" height="2.5" fill="#625e58" />
<rect x="12.5" y="1950" width="2.5" height="2.5" fill="#625e58" />
<rect x="8.5" y="1954" width="2.5" height="2.5" fill="#625e58" />
<rect x="12.5" y="1954" width="2.5" height="2.5" fill="#625e58" />
<polygon points="24,1930 48,1930 56,1934 32,1934" fill="#e8f0f8" stroke="none" stroke-width="2" />
<polygon points="26,1936 50,1936 56,1940 34,1940" fill="#e8f0f8" stroke="none" stroke-width="2" />
<polygon points="28,1942 52,1942 56,1946 36,1946" fill="#e8f0f8" stroke="none" stroke-width="2" />
<polygon points="30,1948 54,1948 56,1952 38,1952" fill="#8ab0d8" stroke="none" stroke-width="2" />
<rect x="40" y="1932" width="16" height="22" fill="#3a6ca8" opacity="0.6"/>
<rect x="67.0" y="1921.0" width="241" height="40" fill="#374b5c" stroke="#6a6866" stroke-width="2" />
<rect x="276.8" y="1928" width="2" height="26" fill="#a8a8a8" />
<rect x="289.8" y="1933" width="8" height="9" fill="#3aa0dc" />
<polygon points="283.8,1941 303.8,1941 293.8,1951" fill="#3aa0dc" stroke="none" stroke-width="2" />
<text x="74.7" y="1950.7" font-size="23" fill="#c8cccd" textLength="125.2" lengthAdjust="spacingAndGlyphs" >Couverture</text>
<rect x="308.0" y="1921.0" width="240" height="40" fill="#374b5c" stroke="#6a6866" stroke-width="2" />
<rect x="517.6" y="1928" width="2" height="26" fill="#a8a8a8" />
<rect x="531" y="1933" width="8" height="9" fill="#3aa0dc" />
<polygon points="525,1941 545,1941 535,1951" fill="#3aa0dc" stroke="none" stroke-width="2" />
<text x="314" y="1950.7" font-size="23" fill="#c8cccd" textLength="187.0" lengthAdjust="spacingAndGlyphs" >Tous les calques</text>
<rect x="548.0" y="1921.0" width="238" height="40" fill="#374b5c" stroke="#6a6866" stroke-width="2" />
<rect x="757.6" y="1928" width="2" height="26" fill="#a8a8a8" />
<rect x="771" y="1933" width="8" height="9" fill="#3aa0dc" />
<polygon points="765,1941 785,1941 775,1951" fill="#3aa0dc" stroke="none" stroke-width="2" />
<text x="554.5" y="1950.7" font-size="23" fill="#c8cccd" textLength="160.3" lengthAdjust="spacingAndGlyphs" >Depuis calque</text>
<rect x="8.5" y="1978" width="2.5" height="2.5" fill="#625e58" />
<rect x="12.5" y="1978" width="2.5" height="2.5" fill="#625e58" />
<rect x="8.5" y="1982" width="2.5" height="2.5" fill="#625e58" />
<rect x="12.5" y="1982" width="2.5" height="2.5" fill="#625e58" />
<rect x="8.5" y="1986" width="2.5" height="2.5" fill="#625e58" />
<rect x="12.5" y="1986" width="2.5" height="2.5" fill="#625e58" />
<rect x="8.5" y="1990" width="2.5" height="2.5" fill="#625e58" />
<rect x="12.5" y="1990" width="2.5" height="2.5" fill="#625e58" />
<rect x="8.5" y="1994" width="2.5" height="2.5" fill="#625e58" />
<rect x="12.5" y="1994" width="2.5" height="2.5" fill="#625e58" />
<rect x="8.5" y="1998" width="2.5" height="2.5" fill="#625e58" />
<rect x="12.5" y="1998" width="2.5" height="2.5" fill="#625e58" />
<rect x="8.5" y="2002" width="2.5" height="2.5" fill="#625e58" />
<rect x="12.5" y="2002" width="2.5" height="2.5" fill="#625e58" />
<rect x="8.5" y="2006" width="2.5" height="2.5" fill="#625e58" />
<rect x="12.5" y="2006" width="2.5" height="2.5" fill="#625e58" />
<line x1="27.3" y1="2006" x2="51.3" y2="1982" stroke="#a8a8a8" stroke-width="3" />
<rect x="24.3" y="2003" width="6" height="6" fill="#2e86d8" />
<rect x="48.3" y="1979" width="6" height="6" fill="#2e86d8" />
<rect x="41.3" y="1992" width="14" height="18" fill="#e8f0f8" />
<rect x="44.3" y="1995" width="10" height="2" fill="#4a7ab0" />
<rect x="44.3" y="1999" width="10" height="2" fill="#4a7ab0" />
<rect x="44.3" y="2003" width="10" height="2" fill="#4a7ab0" />
<rect x="44.3" y="2007" width="10" height="2" fill="#4a7ab0" />
<rect x="74" y="1970" width="3" height="48" fill="#6a6866" />
<rect x="99.5" y="1984" width="16" height="16" fill="#3a6090" />
<line x1="107.5" y1="1978" x2="107.5" y2="2006" stroke="#3a6090" stroke-width="2" />
<line x1="95.5" y1="1992" x2="119.5" y2="1992" stroke="#3a6090" stroke-width="2" />
<rect x="102.5" y="1986" width="4" height="4" fill="#d0d8e0" />
<rect x="108.5" y="1986" width="4" height="4" fill="#d0d8e0" />
<rect x="102.5" y="1993" width="4" height="4" fill="#b0c0d0" />
<line x1="143.8" y1="2006" x2="167.8" y2="1982" stroke="#a0a0a0" stroke-width="2" />
<rect x="140.8" y="2003.0" width="6" height="6" fill="none" stroke="#a0a0a0" stroke-width="2" />
<rect x="164.8" y="1979.0" width="6" height="6" fill="none" stroke="#a0a0a0" stroke-width="2" />
<rect x="146.8" y="1995.0" width="7" height="7" fill="#ffffff" stroke="#2e86d8" stroke-width="2" />
<rect x="156.8" y="1985.0" width="7" height="7" fill="#ffffff" stroke="#2e86d8" stroke-width="2" />
<rect x="190" y="1970" width="3" height="48" fill="#6a6866" />
<line x1="209" y1="2006" x2="233" y2="1982" stroke="#a8a8a8" stroke-width="3" />
<rect x="206" y="2003" width="6" height="6" fill="#2e86d8" />
<rect x="230" y="1979" width="6" height="6" fill="#2e86d8" />
<line x1="260" y1="2006" x2="284" y2="1982" stroke="#a8a8a8" stroke-width="3" />
<rect x="259" y="2003" width="6" height="6" fill="#2e86d8" />
<rect x="281" y="1981" width="6" height="6" fill="#2e86d8" />
<line x1="256" y1="2000" x2="268" y2="1978" stroke="#a0a0a0" stroke-width="2" stroke-dasharray="3,2"/>
<line x1="264" y1="2008" x2="286" y2="1998" stroke="#a0a0a0" stroke-width="2" stroke-dasharray="3,2"/>
<rect x="306" y="1970" width="3" height="48" fill="#6a6866" />
<circle cx="336.5" cy="1994" r="14" fill="url(#gw)" stroke="#909090" stroke-width="3"/>
<line x1="333.5" y1="1996" x2="343.5" y2="1986" stroke="#2e86d8" stroke-width="3" />
<rect x="331.5" y="1994" width="6" height="6" fill="#2e86d8" />
<rect x="372" y="1970" width="3" height="48" fill="#6a6866" />
<line x1="391.8" y1="2006" x2="415.8" y2="1982" stroke="#a8a8a8" stroke-width="3" />
<rect x="388.8" y="2003" width="6" height="6" fill="#2e86d8" />
<rect x="412.8" y="1979" width="6" height="6" fill="#2e86d8" />
<polygon points="391.8,1998 399.8,1982 403.8,1984 395.8,2000" fill="#f0d060" stroke="#3a6090" stroke-width="1.5" />
<rect x="398.8" y="1980" width="4" height="4" fill="#e82828" />
<line x1="442" y1="2006" x2="466" y2="1982" stroke="#a8a8a8" stroke-width="3" />
<rect x="439" y="2003" width="6" height="6" fill="#2e86d8" />
<rect x="463" y="1979" width="6" height="6" fill="#2e86d8" />
<line x1="448" y1="1986" x2="468" y2="2006" stroke="#e82828" stroke-width="3" />
<line x1="468" y1="1986" x2="448" y2="2006" stroke="#e82828" stroke-width="3" />
<rect x="490.5" y="1978" width="2.5" height="2.5" fill="#625e58" />
<rect x="494.5" y="1978" width="2.5" height="2.5" fill="#625e58" />
<rect x="490.5" y="1982" width="2.5" height="2.5" fill="#625e58" />
<rect x="494.5" y="1982" width="2.5" height="2.5" fill="#625e58" />
<rect x="490.5" y="1986" width="2.5" height="2.5" fill="#625e58" />
<rect x="494.5" y="1986" width="2.5" height="2.5" fill="#625e58" />
<rect x="490.5" y="1990" width="2.5" height="2.5" fill="#625e58" />
<rect x="494.5" y="1990" width="2.5" height="2.5" fill="#625e58" />
<rect x="490.5" y="1994" width="2.5" height="2.5" fill="#625e58" />
<rect x="494.5" y="1994" width="2.5" height="2.5" fill="#625e58" />
<rect x="490.5" y="1998" width="2.5" height="2.5" fill="#625e58" />
<rect x="494.5" y="1998" width="2.5" height="2.5" fill="#625e58" />
<rect x="490.5" y="2002" width="2.5" height="2.5" fill="#625e58" />
<rect x="494.5" y="2002" width="2.5" height="2.5" fill="#625e58" />
<rect x="490.5" y="2006" width="2.5" height="2.5" fill="#625e58" />
<rect x="494.5" y="2006" width="2.5" height="2.5" fill="#625e58" />
<polyline points="510.6,2006 516.6,1986 534.6,1980" fill="none" stroke="#b040d0" stroke-width="3" />
<rect x="507.6" y="2005" width="6" height="6" fill="#2e86d8" />
<rect x="513.6" y="1985" width="6" height="6" fill="#2e86d8" />
<rect x="531.6" y="1979" width="6" height="6" fill="#2e86d8" />
<polyline points="560.7,2006 566.7,1986 584.7,1980" fill="none" stroke="#b040d0" stroke-width="3" />
<rect x="557.7" y="2005" width="6" height="6" fill="#2e86d8" />
<rect x="563.7" y="1985" width="6" height="6" fill="#2e86d8" />
<rect x="581.7" y="1979" width="6" height="6" fill="#2e86d8" />
<rect x="584.7" y="1978" width="2" height="26" fill="#a0a0a0" />
<rect x="583.7" y="2003" width="6" height="6" fill="#2e86d8" />
<line x1="574.7" y1="1992" x2="574.7" y2="2004" stroke="#4a6a90" stroke-width="2" />
<line x1="568.7" y1="1998" x2="580.7" y2="1998" stroke="#4a6a90" stroke-width="2" />
<polyline points="609.6,2006 615.6,1986 633.6,1980" fill="none" stroke="#b040d0" stroke-width="3" />
<rect x="606.6" y="2005" width="6" height="6" fill="#2e86d8" />
<rect x="612.6" y="1985" width="6" height="6" fill="#2e86d8" />
<rect x="630.6" y="1979" width="6" height="6" fill="#2e86d8" />
<circle cx="623.6" cy="2002" r="6" fill="#2a5a88"/>
<path d="M633.6 1994 a4 8 0 0 1 0 14" fill="none" stroke="#f0e040" stroke-width="2" stroke-dasharray="2,2"/>
<rect x="656" y="1970" width="3" height="48" fill="#6a6866" />
<polyline points="676,2006 682,1986 700,1980" fill="none" stroke="#b040d0" stroke-width="3" />
<rect x="673" y="2005" width="6" height="6" fill="#2e86d8" />
<rect x="679" y="1985" width="6" height="6" fill="#2e86d8" />
<rect x="697" y="1979" width="6" height="6" fill="#2e86d8" />
<polygon points="682,1996 702,2008 688,2008" fill="#4a7aa8" stroke="none" stroke-width="2" />
<line x1="680" y1="1990" x2="696" y2="2004" stroke="#4a7aa8" stroke-width="3" />
<polyline points="726,2006 732,1986 750,1980" fill="none" stroke="#b040d0" stroke-width="3" />
<rect x="723" y="2005" width="6" height="6" fill="#2e86d8" />
<rect x="729" y="1985" width="6" height="6" fill="#2e86d8" />
<rect x="747" y="1979" width="6" height="6" fill="#2e86d8" />
<polyline points="726,2006 748,2006 748,1998" fill="none" stroke="#e040e0" stroke-width="2" stroke-dasharray="2,3"/>
<rect x="747" y="1999" width="6" height="6" fill="#6a70e0" />
<polyline points="776,2006 782,1986 800,1980" fill="none" stroke="#b040d0" stroke-width="3" />
<rect x="773" y="2005" width="6" height="6" fill="#2e86d8" />
<rect x="779" y="1985" width="6" height="6" fill="#2e86d8" />
<rect x="797" y="1979" width="6" height="6" fill="#2e86d8" />
<rect x="778" y="1984" width="6" height="6" fill="#a8b8f8" />
<line x1="782" y1="1988" x2="800" y2="2006" stroke="#4a7aa8" stroke-width="3" />
<polygon points="794,2008 802,2008 802,1998" fill="#4a7aa8" stroke="none" stroke-width="2" />
<polyline points="826,2006 832,1986 850,1980" fill="none" stroke="#b040d0" stroke-width="3" />
<rect x="823" y="2005" width="6" height="6" fill="#2e86d8" />
<rect x="829" y="1985" width="6" height="6" fill="#2e86d8" />
<rect x="847" y="1979" width="6" height="6" fill="#2e86d8" />
<line x1="824" y1="1980" x2="846" y2="1998" stroke="#e82828" stroke-width="3" />
<line x1="824" y1="2000" x2="842" y2="1982" stroke="#e82828" stroke-width="3" />
<rect x="874.5" y="1978" width="2.5" height="2.5" fill="#625e58" />
<rect x="878.5" y="1978" width="2.5" height="2.5" fill="#625e58" />
<rect x="874.5" y="1982" width="2.5" height="2.5" fill="#625e58" />
<rect x="878.5" y="1982" width="2.5" height="2.5" fill="#625e58" />
<rect x="874.5" y="1986" width="2.5" height="2.5" fill="#625e58" />
<rect x="878.5" y="1986" width="2.5" height="2.5" fill="#625e58" />
<rect x="874.5" y="1990" width="2.5" height="2.5" fill="#625e58" />
<rect x="878.5" y="1990" width="2.5" height="2.5" fill="#625e58" />
<rect x="874.5" y="1994" width="2.5" height="2.5" fill="#625e58" />
<rect x="878.5" y="1994" width="2.5" height="2.5" fill="#625e58" />
<rect x="874.5" y="1998" width="2.5" height="2.5" fill="#625e58" />
<rect x="878.5" y="1998" width="2.5" height="2.5" fill="#625e58" />
<rect x="874.5" y="2002" width="2.5" height="2.5" fill="#625e58" />
<rect x="878.5" y="2002" width="2.5" height="2.5" fill="#625e58" />
<rect x="874.5" y="2006" width="2.5" height="2.5" fill="#625e58" />
<rect x="878.5" y="2006" width="2.5" height="2.5" fill="#625e58" />
<circle cx="896.8" cy="1986" r="6" fill="url(#gw)" stroke="#a0a0a0" stroke-width="2"/>
<circle cx="911.8" cy="2002" r="7" fill="url(#gw)" stroke="#a0a0a0" stroke-width="2"/>
<line x1="905.8" y1="1982" x2="913.8" y2="1990" stroke="#a0a0a0" stroke-width="2" />
<circle cx="947" cy="1986" r="6" fill="url(#gw)" stroke="#a0a0a0" stroke-width="2"/>
<circle cx="962" cy="2002" r="7" fill="url(#gw)" stroke="#a0a0a0" stroke-width="2"/>
<path d="M958 1982 a8 8 0 0 1 6 14" fill="none" stroke="#a0a0a0" stroke-width="2"/>
<rect x="961" y="1987" width="6" height="6" fill="#2e86d8" />
<polygon points="992,2008 1002,1984 1002,2008" fill="url(#glb)" stroke="#a0a0a0" stroke-width="2" />
<polygon points="1018,2008 1008,1984 1008,2008" fill="url(#glb)" stroke="#a0a0a0" stroke-width="2" />
<rect x="1004" y="1978" width="2" height="32" fill="#3a6090" />
<polygon points="1048,1980 1064,1980 1064,1992 1072,1992 1072,2008 1040,2008 1040,1992 1048,1992" fill="#c8d0d8" stroke="#a0a0a0" stroke-width="2" />
<polyline points="1052,1984 1060,1984 1060,1996 1068,1996 1068,2004 1044,2004 1044,1996 1052,1996 1052,1984" fill="none" stroke="#2e86d8" stroke-width="3" />
<rect x="1090" y="1970" width="3" height="48" fill="#6a6866" />
<rect x="1105" y="1988" width="8" height="4" fill="#a0a0a0" />
<line x1="1111" y1="2008" x2="1127" y2="1980" stroke="#2e86d8" stroke-width="2" />
<rect x="1121" y="1988" width="4" height="4" fill="#2e86d8" />
<rect x="1127" y="1988" width="4" height="4" fill="#2e86d8" />
<rect x="1133" y="1988" width="4" height="4" fill="#2e86d8" />
<rect x="1155.8" y="1988" width="8" height="4" fill="#a0a0a0" />
<rect x="1167.8" y="1988" width="4" height="4" fill="#2e86d8" />
<rect x="1173.8" y="1988" width="4" height="4" fill="#2e86d8" />
<line x1="1171.8" y1="2008" x2="1187.8" y2="1980" stroke="#2e86d8" stroke-width="2" />
<rect x="1207" y="1980" width="4" height="28" fill="#a0a0a0" />
<rect x="1207" y="1980" width="30" height="4" fill="#a0a0a0" />
<rect x="1207" y="1980" width="16" height="4" fill="#2e86d8" />
<rect x="1207" y="1980" width="4" height="14" fill="#2e86d8" />
<line x1="1258" y1="2008" x2="1286" y2="1980" stroke="#a0a0a0" stroke-width="2" />
<rect x="1268" y="1990" width="8" height="8" fill="#2e86d8" />
<rect x="1306" y="1970" width="3" height="48" fill="#6a6866" />
<line x1="1338.5" y1="1980" x2="1338.5" y2="2008" stroke="#2e86d8" stroke-width="3" />
<line x1="1324.5" y1="1994" x2="1352.5" y2="1994" stroke="#2e86d8" stroke-width="3" />
<polygon points="1332.5,1985 1338.5,1978 1344.5,1985" fill="#2e86d8" stroke="none" stroke-width="2" />
<polygon points="1332.5,2003 1338.5,2010 1344.5,2003" fill="#2e86d8" stroke="none" stroke-width="2" />
<polygon points="1330.5,1988 1323.5,1994 1330.5,2000" fill="#2e86d8" stroke="none" stroke-width="2" />
<polygon points="1346.5,1988 1353.5,1994 1346.5,2000" fill="#2e86d8" stroke="none" stroke-width="2" />
<path d="M1381.6 1984 A12 12 0 1 0 1393.6 1982" fill="none" stroke="#2e86d8" stroke-width="4" stroke-dasharray="5,2"/>
<polygon points="1375.6,1982 1387.6,1980 1383.6,1990" fill="#2e86d8" stroke="none" stroke-width="2" />
<rect x="1422" y="1970" width="3" height="48" fill="#6a6866" />
<polygon points="1445.7,2004 1465.7,1980 1469.7,1984 1451.7,2008" fill="#e8d060" stroke="none" stroke-width="2" />
<polygon points="1443.7,2002 1451.7,1998 1453.7,2006 1445.7,2010" fill="#b04040" stroke="none" stroke-width="2" />
<rect x="1457.7" y="2006" width="12" height="2" fill="#909090" />
<rect x="1490.5" y="1978" width="2.5" height="2.5" fill="#625e58" />
<rect x="1494.5" y="1978" width="2.5" height="2.5" fill="#625e58" />
<rect x="1490.5" y="1982" width="2.5" height="2.5" fill="#625e58" />
<rect x="1494.5" y="1982" width="2.5" height="2.5" fill="#625e58" />
<rect x="1490.5" y="1986" width="2.5" height="2.5" fill="#625e58" />
<rect x="1494.5" y="1986" width="2.5" height="2.5" fill="#625e58" />
<rect x="1490.5" y="1990" width="2.5" height="2.5" fill="#625e58" />
<rect x="1494.5" y="1990" width="2.5" height="2.5" fill="#625e58" />
<rect x="1490.5" y="1994" width="2.5" height="2.5" fill="#625e58" />
<rect x="1494.5" y="1994" width="2.5" height="2.5" fill="#625e58" />
<rect x="1490.5" y="1998" width="2.5" height="2.5" fill="#625e58" />
<rect x="1494.5" y="1998" width="2.5" height="2.5" fill="#625e58" />
<rect x="1490.5" y="2002" width="2.5" height="2.5" fill="#625e58" />
<rect x="1494.5" y="2002" width="2.5" height="2.5" fill="#625e58" />
<rect x="1490.5" y="2006" width="2.5" height="2.5" fill="#625e58" />
<rect x="1494.5" y="2006" width="2.5" height="2.5" fill="#625e58" />
<rect x="1505" y="1992" width="4" height="18" fill="#e82828" />
<rect x="1533" y="1992" width="4" height="18" fill="#e82828" />
<rect x="1505" y="2000" width="32" height="3" fill="#e82828" />
<rect x="1517" y="1996" width="3" height="14" fill="#e82828" />
<rect x="1509" y="1990" width="8" height="3" fill="#e82828" />
<rect x="1523" y="1990" width="8" height="3" fill="#e82828" />
<rect x="1555" y="1992" width="4" height="18" fill="#2e86d8" />
<rect x="1583" y="1992" width="4" height="18" fill="#2e86d8" />
<rect x="1555" y="2000" width="32" height="3" fill="#2e86d8" />
<rect x="1569" y="1996" width="3" height="14" fill="#2e86d8" />
<rect x="1567" y="1982" width="3" height="10" fill="#2e86d8" />
<rect x="1583" y="1982" width="3" height="10" fill="#2e86d8" />
<rect x="1620" y="1978" width="14" height="3" fill="#e82828" />
<rect x="1620" y="2008" width="14" height="3" fill="#e82828" />
<rect x="1625" y="1978" width="3" height="32" fill="#e82828" />
<rect x="1612" y="1984" width="3" height="8" fill="#e82828" />
<rect x="1612" y="1996" width="3" height="10" fill="#e82828" />
<rect x="1620" y="1992" width="10" height="3" fill="#e82828" />
<rect x="1669" y="1978" width="18" height="3" fill="#2e86d8" />
<rect x="1669" y="2008" width="18" height="3" fill="#2e86d8" />
<rect x="1676" y="1978" width="3" height="32" fill="#2e86d8" />
<rect x="1659" y="1978" width="8" height="3" fill="#2e86d8" />
<rect x="1659" y="1994" width="8" height="3" fill="#2e86d8" />
<rect x="1669" y="1994" width="18" height="3" fill="#2e86d8" />
<line x1="1710" y1="2004" x2="1732" y2="1984" stroke="#e82828" stroke-width="3" />
<line x1="1706" y1="1998" x2="1716" y2="2010" stroke="#e82828" stroke-width="3" />
<line x1="1726" y1="1980" x2="1738" y2="1990" stroke="#e82828" stroke-width="3" />
<line x1="1759" y1="2004" x2="1781" y2="1984" stroke="#2e86d8" stroke-width="3" />
<line x1="1755" y1="1998" x2="1765" y2="2010" stroke="#2e86d8" stroke-width="3" />
<line x1="1775" y1="1980" x2="1787" y2="1990" stroke="#2e86d8" stroke-width="3" />
<rect x="1806" y="1970" width="3" height="48" fill="#6a6866" />
<rect x="1821.5" y="1996" width="2" height="14" fill="#2e86d8" />
<rect x="1851.5" y="1996" width="2" height="14" fill="#2e86d8" />
<rect x="1821.5" y="2002" width="32" height="2" fill="#2e86d8" />
<rect x="1833.5" y="1998" width="2" height="12" fill="#2e86d8" />
<rect x="1825.5" y="1992" width="10" height="2" fill="#2e86d8" />
<rect x="1839.5" y="1992" width="10" height="2" fill="#2e86d8" />
<text x="1825.5" y="1990" font-size="17" fill="#e82828" textLength="8" lengthAdjust="spacingAndGlyphs" >1</text>
<line x1="1833.5" y1="1986" x2="1851.5" y2="2008" stroke="#e82828" stroke-width="2.5" />
<line x1="1851.5" y1="1984" x2="1831.5" y2="2008" stroke="#e82828" stroke-width="2.5" />
<rect x="1871.6" y="1996" width="2" height="14" fill="#2e86d8" />
<rect x="1901.6" y="1996" width="2" height="14" fill="#2e86d8" />
<rect x="1871.6" y="2002" width="32" height="2" fill="#2e86d8" />
<rect x="1883.6" y="1998" width="2" height="12" fill="#2e86d8" />
<rect x="1875.6" y="1992" width="10" height="2" fill="#2e86d8" />
<rect x="1889.6" y="1992" width="10" height="2" fill="#2e86d8" />
<line x1="1883.6" y1="1986" x2="1901.6" y2="2008" stroke="#e82828" stroke-width="2.5" />
<line x1="1901.6" y1="1984" x2="1881.6" y2="2008" stroke="#e82828" stroke-width="2.5" />
<rect x="1922" y="1970" width="3" height="48" fill="#6a6866" />
<polyline points="1962,1980 1940,1994 1960,2008" fill="none" stroke="#2e86d8" stroke-width="2" />
<path d="M1952 1984 a12 12 0 0 1 0 20" fill="none" stroke="#2e86d8" stroke-width="2"/>
<rect x="1958" y="1984" width="12" height="2" fill="#2e86d8" />
<rect x="1958" y="1988" width="12" height="2" fill="#2e86d8" />
<rect x="1990.5" y="1978" width="2.5" height="2.5" fill="#625e58" />
<rect x="1994.5" y="1978" width="2.5" height="2.5" fill="#625e58" />
<rect x="1990.5" y="1982" width="2.5" height="2.5" fill="#625e58" />
<rect x="1994.5" y="1982" width="2.5" height="2.5" fill="#625e58" />
<rect x="1990.5" y="1986" width="2.5" height="2.5" fill="#625e58" />
<rect x="1994.5" y="1986" width="2.5" height="2.5" fill="#625e58" />
<rect x="1990.5" y="1990" width="2.5" height="2.5" fill="#625e58" />
<rect x="1994.5" y="1990" width="2.5" height="2.5" fill="#625e58" />
<rect x="1990.5" y="1994" width="2.5" height="2.5" fill="#625e58" />
<rect x="1994.5" y="1994" width="2.5" height="2.5" fill="#625e58" />
<rect x="1990.5" y="1998" width="2.5" height="2.5" fill="#625e58" />
<rect x="1994.5" y="1998" width="2.5" height="2.5" fill="#625e58" />
<rect x="1990.5" y="2002" width="2.5" height="2.5" fill="#625e58" />
<rect x="1994.5" y="2002" width="2.5" height="2.5" fill="#625e58" />
<rect x="1990.5" y="2006" width="2.5" height="2.5" fill="#625e58" />
<rect x="1994.5" y="2006" width="2.5" height="2.5" fill="#625e58" />
<text x="2023" y="2010" font-size="34" fill="#a0a0a0" text-anchor="middle" style='font-family:"Liberation Serif", serif' >A</text>
<text x="2032" y="1992" font-size="16" fill="#a0a0a0" textLength="8" lengthAdjust="spacingAndGlyphs" >1</text>
<text x="2071.8" y="2010" font-size="34" fill="#a0a0a0" text-anchor="middle" style='font-family:"Liberation Serif", serif' >A</text>
<line x1="2058.8" y1="1982" x2="2086.8" y2="2008" stroke="#e09080" stroke-width="4" />
<line x1="2086.8" y1="1982" x2="2060.8" y2="2008" stroke="#d06050" stroke-width="4" />
<rect x="2106" y="1970" width="3" height="48" fill="#6a6866" />
<text x="2137" y="2010" font-size="34" fill="#2e86d8" text-anchor="middle" style='font-family:"Liberation Serif", serif' >A</text>
<line x1="2122" y1="1980" x2="2130" y2="1988" stroke="#2e86d8" stroke-width="2" />
<text x="2146" y="1992" font-size="16" fill="#a0a0a0" textLength="8" lengthAdjust="spacingAndGlyphs" >1</text>
<text x="2186" y="2010" font-size="34" fill="#2e86d8" text-anchor="middle" style='font-family:"Liberation Serif", serif' >A</text>
<line x1="2171" y1="1980" x2="2179" y2="1988" stroke="#2e86d8" stroke-width="2" />
<line x1="2181" y1="1984" x2="2201" y2="1984" stroke="#e82828" stroke-width="2" />
<polygon points="2197,1980 2203,1984 2197,1988" fill="#e82828" stroke="none" stroke-width="2" />
<text x="2237" y="2010" font-size="34" fill="#2e86d8" text-anchor="middle" style='font-family:"Liberation Serif", serif' >A</text>
<line x1="2224" y1="1982" x2="2252" y2="2008" stroke="#e09080" stroke-width="4" />
<line x1="2252" y1="1982" x2="2226" y2="2008" stroke="#d06050" stroke-width="4" />
<rect x="2272" y="1970" width="3" height="48" fill="#6a6866" />
<text x="2304.7" y="2010" font-size="34" fill="#a0a0a0" text-anchor="middle" style='font-family:"Liberation Serif", serif' >A</text>
<path d="M2291.7 1994 A14 12 0 0 1 2319.7 1994" fill="none" stroke="#e82828" stroke-width="4"/>
<polygon points="2305.7,1992 2313.7,2010 2303.7,2010" fill="#2020d0" stroke="none" stroke-width="2" />
<rect x="1.0" y="2023.0" width="2919" height="42" fill="none" stroke="#6a6866" stroke-width="2" />
<rect x="2925.0" y="2023.0" width="155" height="42" fill="none" stroke="#6a6866" stroke-width="2" />
<text x="2931" y="2049.7" font-size="23" fill="#c8cccd" textLength="115.3" lengthAdjust="spacingAndGlyphs" >590 000 K</text>
<rect x="3085.0" y="2023.0" width="115" height="42" fill="none" stroke="#6a6866" stroke-width="2" />
<text x="3091" y="2049.7" font-size="23" fill="#c8cccd" textLength="98.4" lengthAdjust="spacingAndGlyphs" >Direct2D</text>
<rect x="3205.0" y="2023.0" width="35" height="42" fill="none" stroke="#6a6866" stroke-width="2" />
<rect x="3245.0" y="2023.0" width="55" height="42" fill="none" stroke="#6a6866" stroke-width="2" />
<text x="3250" y="2049.7" font-size="23" fill="#c8cccd" textLength="33.7" lengthAdjust="spacingAndGlyphs" >cm</text>
<rect x="3305.0" y="2023.0" width="255" height="42" fill="none" stroke="#6a6866" stroke-width="2" />
<text x="3310" y="2049.7" font-size="23" fill="#c8cccd" textLength="185.6" lengthAdjust="spacingAndGlyphs" >Toit Structure F8</text>
<rect x="3565.0" y="2023.0" width="274" height="42" fill="none" stroke="#6a6866" stroke-width="2" />
<text x="3570" y="2049.7" font-size="23" fill="#c8cccd" textLength="238.5" lengthAdjust="spacingAndGlyphs" >H 20°/ 70°/230°/  0°</text>
</svg></body></html>
